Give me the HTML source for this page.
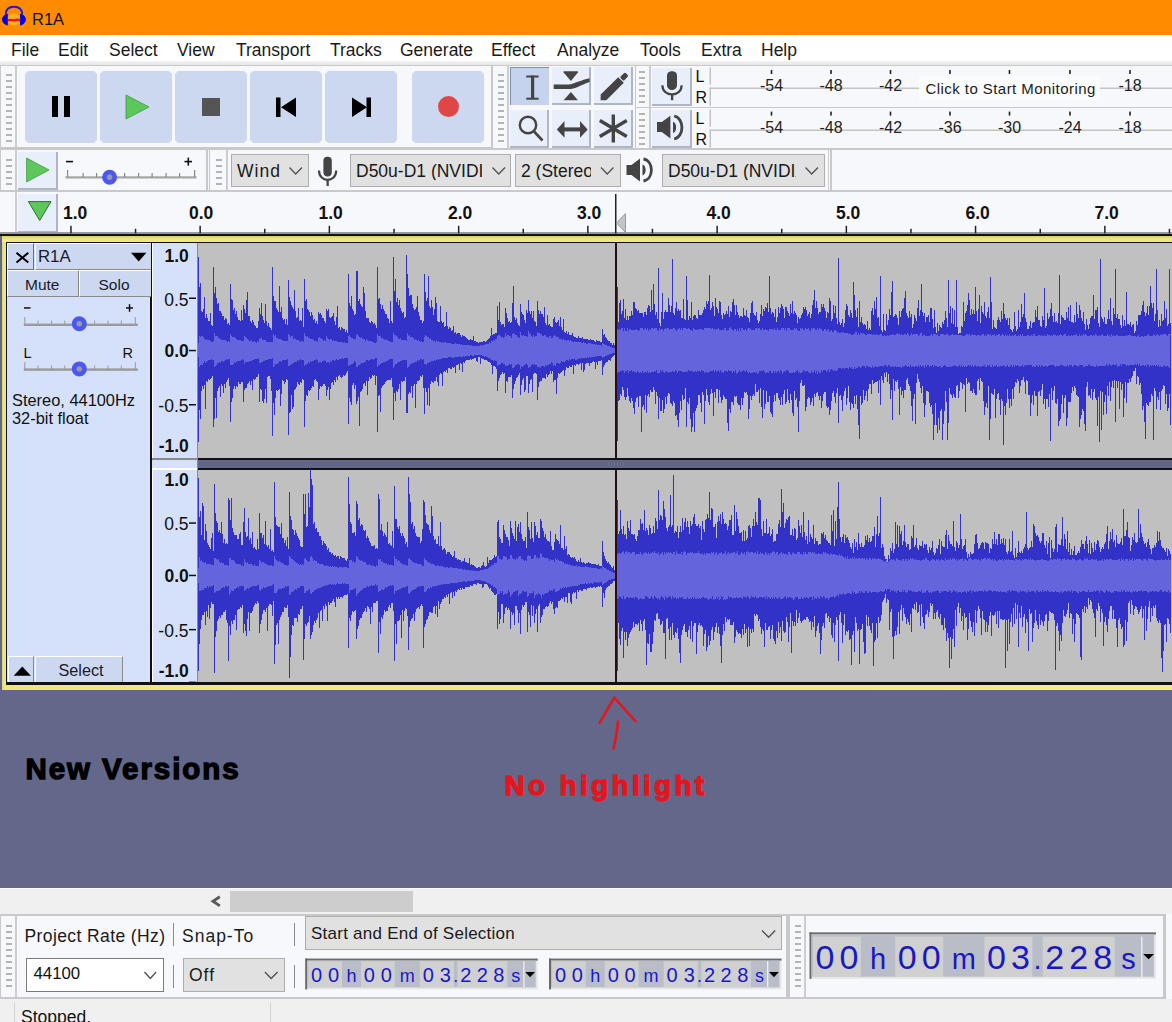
<!DOCTYPE html>
<html><head><meta charset="utf-8">
<style>
*{margin:0;padding:0;box-sizing:border-box}
html,body{width:1172px;height:1022px;overflow:hidden;background:#63678a;font-family:"Liberation Sans",sans-serif;color:#000}
.a{position:absolute}
.t{position:absolute;white-space:nowrap;line-height:1}
#title{left:0;top:0;width:1172px;height:35px;background:#ff8c00}
#menu{left:0;top:35px;width:1172px;height:27px;background:#fff}
#menu .t{top:42px;font-size:17.5px;color:#1a1a1a}
#tb{left:0;top:62px;width:1172px;height:130px;background:#f7f8fc}
.tbb{position:absolute;background:#f7f8fc;border:1px solid #cfcfcf}
.grip{position:absolute;width:6px}
.grip i{position:absolute;left:0;width:6px;height:2px;background:#b4b4b4}
.tbtn{position:absolute;width:72px;height:72px;background:#cbd8f0;clip-path:polygon(3px 0,69px 0,72px 3px,72px 69px,69px 72px,3px 72px,0 69px,0 3px)}
.tool{position:absolute;width:39px;height:38px;background:#e9eefb;border-right:2px solid #aeb6c6;border-bottom:2px solid #aeb6c6}
.combo{position:absolute;height:33px;background:#e1e1e1;border:1px solid #adadad;overflow:hidden}
.combo .t{font-size:17.5px;top:8px;left:5px;color:#1a1a1a}
.chev{position:absolute;width:9px;height:9px;border-right:1.5px solid #444;border-bottom:1.5px solid #444;transform:rotate(45deg)}
</style></head><body>
<!-- title -->
<div id="title" class="a">
 <svg class="a" style="left:0;top:0" width="28" height="30" viewBox="0 0 28 30">
  <path d="M5.8 14.5 C5.8 9 9.2 6.7 14 6.7 C18.8 6.7 22.2 9 22.2 14.5" fill="none" stroke="#1a1ae8" stroke-width="1.9"/>
  <ellipse cx="13.9" cy="19.5" rx="6.2" ry="6" fill="#f4b21c"/>
  <path d="M7.8 20.3 C10 19.6 12 19.8 14 20.5 C16 19.6 18 19.6 20.2 20.3" fill="none" stroke="#f21010" stroke-width="2.4"/>
  <path d="M7.8 13.8 L7.8 25.4 C4.5 25 2 22 2 19.5 C2 17 4.5 14.2 7.8 13.8 Z" fill="#0000f0"/>
  <path d="M20.1 13.8 L20.1 25.4 C23.4 25 25.9 22 25.9 19.5 C25.9 17 23.4 14.2 20.1 13.8 Z" fill="#0000f0"/>
 </svg>
 <div class="t" style="left:32px;top:11px;font-size:16.5px;color:#111">R1A</div>
</div>
<!-- menu -->
<div id="menu" class="a">
 <div class="t" style="left:11px;top:7px">File</div>
 <div class="t" style="left:58px;top:7px">Edit</div>
 <div class="t" style="left:109px;top:7px">Select</div>
 <div class="t" style="left:177px;top:7px">View</div>
 <div class="t" style="left:236px;top:7px">Transport</div>
 <div class="t" style="left:330px;top:7px">Tracks</div>
 <div class="t" style="left:400px;top:7px">Generate</div>
 <div class="t" style="left:491px;top:7px">Effect</div>
 <div class="t" style="left:557px;top:7px">Analyze</div>
 <div class="t" style="left:640px;top:7px">Tools</div>
 <div class="t" style="left:701px;top:7px">Extra</div>
 <div class="t" style="left:761px;top:7px">Help</div>
</div>
<div class="a" style="left:0;top:61px;width:1172px;height:4px;background:linear-gradient(#f4f4f4,#e6e6e6)"></div>
<div class="a" style="left:0;top:65px;width:1172px;height:127px;background:#c9c9c9"></div>
<!-- Transport toolbar -->
<div class="a" style="left:1px;top:66px;width:490px;height:81px;background:#f7f8fc"></div>
<div class="a" style="left:15px;top:66px;width:2px;height:81px;background:#cdcdcd"></div>
<div class="grip" style="left:6px;top:74px;height:70px"><i style="top:0px"></i><i style="top:6px"></i><i style="top:12px"></i><i style="top:18px"></i><i style="top:24px"></i><i style="top:30px"></i><i style="top:36px"></i><i style="top:42px"></i><i style="top:48px"></i><i style="top:54px"></i><i style="top:60px"></i><i style="top:66px"></i></div>
<div class="tbtn" style="left:25px;top:71px"></div>
<div class="tbtn" style="left:100px;top:71px"></div>
<div class="tbtn" style="left:175px;top:71px"></div>
<div class="tbtn" style="left:250px;top:71px"></div>
<div class="tbtn" style="left:325px;top:71px"></div>
<div class="tbtn" style="left:412px;top:71px"></div>
<svg class="a" style="left:0;top:62px" width="492" height="90">
 <rect x="52" y="34" width="6" height="21" fill="#000"/>
 <rect x="64" y="34" width="6" height="21" fill="#000"/>
 <polygon points="126,33 149,45 126,57" fill="#5cc85c" stroke="#3f9a3f" stroke-width="0.8"/>
 <rect x="202" y="36" width="18" height="18" fill="#555"/>
 <rect x="276" y="35.5" width="4.5" height="19.5" fill="#000"/>
 <polygon points="281,45.3 296,35.5 296,55" fill="#000"/>
 <polygon points="352,35.5 367,45.3 352,55" fill="#000"/>
 <rect x="366.5" y="35.5" width="4.5" height="19.5" fill="#000"/>
 <circle cx="448.5" cy="44.6" r="10.5" fill="#e04646"/>
</svg>
<!-- Tools toolbar -->
<div class="a" style="left:493px;top:66px;width:142px;height:82px;background:#f7f8fc"></div>
<div class="a" style="left:507px;top:66px;width:2px;height:82px;background:#cdcdcd"></div>
<div class="grip" style="left:498px;top:74px;height:70px"><i style="top:0px"></i><i style="top:6px"></i><i style="top:12px"></i><i style="top:18px"></i><i style="top:24px"></i><i style="top:30px"></i><i style="top:36px"></i><i style="top:42px"></i><i style="top:48px"></i><i style="top:54px"></i><i style="top:60px"></i><i style="top:66px"></i></div>
<div class="a" style="left:510px;top:67px;width:39px;height:38px;background:#c5d3ee;border-top:1px solid #7f8ea8;border-left:1px solid #7f8ea8"></div>
<div class="tool" style="left:552px;top:67px"></div>
<div class="tool" style="left:594px;top:67px"></div>
<div class="tool" style="left:510px;top:110px"></div>
<div class="tool" style="left:552px;top:110px"></div>
<div class="tool" style="left:594px;top:110px"></div>
<svg class="a" style="left:500px;top:62px" width="140" height="90">
 <g fill="#444" stroke="none">
  <rect x="31" y="13.5" width="3.2" height="23"/>
  <rect x="26.3" y="13.5" width="12.3" height="2"/>
  <rect x="26.3" y="35.7" width="12.3" height="2"/>
  <polygon points="63.6,9.3 77.9,9.3 77.9,10.5 70.9,18.9 63.6,10.5"/>
  <polygon points="70.9,29.9 77.9,38.3 63.6,38.3"/>
  <path d="M53.7 22.5 L69 22.5 C76 21 81 18 89.6 16.2 L89.6 20 C81 23 77 26 71 27 L53.7 27 Z"/>
 </g>
 <polygon points="100.6,38.3 100.7,32.5 118.2,15.2 123.8,20.8 106.3,38.3" fill="#444"/>
 <rect x="-3.6" y="-2.6" width="7.2" height="5.2" rx="1.5" fill="#444" transform="translate(124.2,14.6) rotate(-45)"/>
 <circle cx="28" cy="63" r="8.2" fill="none" stroke="#444" stroke-width="2.4"/>
 <path d="M34 69.5 L42.5 78.5" stroke="#444" stroke-width="2.6"/>
 <path d="M61 67.4 L83 67.4" stroke="#444" stroke-width="4"/>
 <polygon points="56.8,67.4 64.5,59 64.5,75.8" fill="#444"/>
 <polygon points="87.7,67.4 80,59 80,75.8" fill="#444"/>
 <g stroke="#444" stroke-width="3.4">
  <path d="M113.3 52.5 L113.3 80.5"/>
  <path d="M99.8 58.5 L126.8 74.5"/>
  <path d="M99.8 74.5 L126.8 58.5"/>
 </g>
</svg>
<!-- Meter toolbars -->
<div class="a" style="left:636px;top:66px;width:536px;height:41px;background:#f7f8fc"></div>
<div class="a" style="left:636px;top:108px;width:536px;height:40px;background:#f7f8fc"></div>
<div class="a" style="left:649px;top:66px;width:2px;height:82px;background:#cdcdcd"></div>
<div class="grip" style="left:639px;top:71px;height:33px"><i style="top:0px"></i><i style="top:6px"></i><i style="top:12px"></i><i style="top:18px"></i><i style="top:24px"></i><i style="top:30px"></i></div>
<div class="grip" style="left:639px;top:113px;height:33px"><i style="top:0px"></i><i style="top:6px"></i><i style="top:12px"></i><i style="top:18px"></i><i style="top:24px"></i><i style="top:30px"></i></div>
<div class="tool" style="left:652px;top:68px;width:40px;height:38px"></div>
<div class="tool" style="left:652px;top:110px;width:40px;height:38px"></div>
<svg class="a" style="left:650px;top:62px" width="60" height="90">
 <path d="M17 14 C17 10 19.5 9.2 22 9.2 C24.5 9.2 27 10 27 14 L27 23 C27 26.5 24.5 28 22 28 C19.5 28 17 26.5 17 23 Z" fill="#444"/>
 <path d="M12.4 23.2 C12.4 35.5 31.6 35.5 31.6 23.2" fill="none" stroke="#444" stroke-width="2.2"/>
 <rect x="20.9" y="32" width="2.4" height="6.2" fill="#444"/>
 <polygon points="7,60.1 11.8,60.1 20.4,53.7 20.4,76.5 11.8,70 7,70" fill="#444"/>
 <path d="M23 59.7 C27.2 60.7 27.2 70 23 71" fill="#444"/>
 <path d="M24.2 54 C34.5 56 34.5 75 24.2 77" fill="none" stroke="#444" stroke-width="2.8"/>
</svg>
<svg class="a" style="left:0;top:0" width="1172" height="160">
<text x="695.5" y="81.9" font-size="16" fill="#111">L</text>
<text x="695.5" y="102.5" font-size="16" fill="#111">R</text>
<rect x="709.5" y="67.6" width="1.5" height="17.1" fill="#c4c4c4"/>
<rect x="709.5" y="87.5" width="1.5" height="18.4" fill="#c4c4c4"/>
<rect x="709.5" y="87.5" width="463" height="1.5" fill="#c4c4c4"/>
<rect x="770.7" y="70.0" width="1.6" height="4" fill="#222"/>
<text x="771.5" y="91.0" font-size="16" fill="#222" text-anchor="middle">-54</text>
<rect x="830.2" y="70.0" width="1.6" height="4" fill="#222"/>
<text x="831.0" y="91.0" font-size="16" fill="#222" text-anchor="middle">-48</text>
<rect x="889.7" y="70.0" width="1.6" height="4" fill="#222"/>
<text x="890.5" y="91.0" font-size="16" fill="#222" text-anchor="middle">-42</text>
<rect x="949.2" y="70.0" width="1.6" height="4" fill="#222"/>
<rect x="1008.7" y="70.0" width="1.6" height="4" fill="#222"/>
<rect x="1069.2" y="70.0" width="1.6" height="4" fill="#222"/>
<rect x="1129.2" y="70.0" width="1.6" height="4" fill="#222"/>
<text x="1130.0" y="91.0" font-size="16" fill="#222" text-anchor="middle">-18</text>
<text x="695.5" y="123.8" font-size="16" fill="#111">L</text>
<text x="695.5" y="144.8" font-size="16" fill="#111">R</text>
<rect x="709.5" y="109.4" width="1.5" height="17.3" fill="#c4c4c4"/>
<rect x="709.5" y="129.5" width="1.5" height="18.2" fill="#c4c4c4"/>
<rect x="709.5" y="129.5" width="463" height="1.5" fill="#c4c4c4"/>
<rect x="770.7" y="111.6" width="1.6" height="4" fill="#222"/>
<text x="771.5" y="133.0" font-size="16" fill="#222" text-anchor="middle">-54</text>
<rect x="830.2" y="111.6" width="1.6" height="4" fill="#222"/>
<text x="831.0" y="133.0" font-size="16" fill="#222" text-anchor="middle">-48</text>
<rect x="889.7" y="111.6" width="1.6" height="4" fill="#222"/>
<text x="890.5" y="133.0" font-size="16" fill="#222" text-anchor="middle">-42</text>
<rect x="949.2" y="111.6" width="1.6" height="4" fill="#222"/>
<text x="950.0" y="133.0" font-size="16" fill="#222" text-anchor="middle">-36</text>
<rect x="1008.7" y="111.6" width="1.6" height="4" fill="#222"/>
<text x="1009.5" y="133.0" font-size="16" fill="#222" text-anchor="middle">-30</text>
<rect x="1069.2" y="111.6" width="1.6" height="4" fill="#222"/>
<text x="1070.0" y="133.0" font-size="16" fill="#222" text-anchor="middle">-24</text>
<rect x="1129.2" y="111.6" width="1.6" height="4" fill="#222"/>
<text x="1130.0" y="133.0" font-size="16" fill="#222" text-anchor="middle">-18</text>
<rect x="919" y="76" width="181" height="24" fill="#fbfcfe"/>
<text x="925.5" y="93.5" font-size="15" fill="#222" letter-spacing="0.44">Click to Start Monitoring</text>
</svg><!-- Row 2 -->
<div class="a" style="left:1px;top:150px;width:205px;height:40px;background:#f7f8fc"></div>
<div class="a" style="left:15px;top:150px;width:2px;height:40px;background:#cdcdcd"></div>
<div class="grip" style="left:6px;top:159px;height:28px"><i style="top:0px"></i><i style="top:6px"></i><i style="top:12px"></i><i style="top:18px"></i><i style="top:24px"></i></div>
<div class="tool" style="left:18px;top:152px;width:40px;height:38px"></div>
<svg class="a" style="left:0;top:148px" width="206" height="44">
 <polygon points="26.6,10 49,22 26.6,34" fill="#5cc85c" stroke="#3f9a3f" stroke-width="0.8"/>
 <rect x="65.5" y="28.3" width="131" height="2.2" fill="#a4a4a4"/>
 <g fill="#888">
  <rect x="67" y="22" width="1.2" height="7"/><rect x="82.5" y="25" width="1.2" height="4"/><rect x="96" y="25" width="1.2" height="4"/>
  <rect x="124" y="25" width="1.2" height="4"/><rect x="138" y="25" width="1.2" height="4"/><rect x="151.5" y="25" width="1.2" height="4"/>
  <rect x="165.5" y="25" width="1.2" height="4"/><rect x="179" y="25" width="1.2" height="4"/><rect x="194" y="22" width="1.2" height="7"/>
 </g>
 <rect x="66" y="12.8" width="7" height="1.6" fill="#111"/>
 <rect x="184.5" y="12.8" width="7.5" height="1.6" fill="#111"/>
 <rect x="187.5" y="9.6" width="1.6" height="8" fill="#111"/>
 <circle cx="109.6" cy="29.3" r="5.1" fill="#9a9aa6" stroke="#4a58f0" stroke-width="4.8"/>
</svg>
<div class="a" style="left:208px;top:150px;width:1px;height:40px;background:#f7f8fc"></div>
<div class="a" style="left:210px;top:150px;width:620px;height:40px;background:#f7f8fc"></div>
<div class="a" style="left:226px;top:150px;width:2px;height:40px;background:#cdcdcd"></div>
<div class="grip" style="left:216px;top:159px;height:28px"><i style="top:0px"></i><i style="top:6px"></i><i style="top:12px"></i><i style="top:18px"></i><i style="top:24px"></i></div>
<div class="combo" style="left:231px;top:154px;width:78px"><div class="t" style="left:5px;top:7.5px;letter-spacing:1px">Wind</div></div>
<div class="combo" style="left:350px;top:154px;width:161px"><div class="t" style="left:5px;top:7.5px;width:126px;overflow:hidden">D50u-D1 (NVIDIA</div></div>
<div class="combo" style="left:515px;top:154px;width:106px"><div class="t" style="left:5px;top:7.5px;width:70px;overflow:hidden">2 (Stereo)</div></div>
<div class="combo" style="left:662px;top:154px;width:163px"><div class="t" style="left:5px;top:7.5px;width:128px;overflow:hidden">D50u-D1 (NVIDIA</div></div>
<svg class="a" style="left:200px;top:148px" width="640" height="44">
 <g fill="none" stroke="#505050" stroke-width="1.3">
  <polyline points="89.5,19.5 95.7,26 102,19.5"/>
  <polyline points="292.5,19.5 298.7,26 305,19.5"/>
  <polyline points="401,19.5 407.2,26 413.5,19.5"/>
  <polyline points="605.5,19.5 611.7,26 618,19.5"/>
 </g>
 <path d="M123.4 13 C123.4 9.5 125.5 8.8 127.6 8.8 C129.7 8.8 131.8 9.5 131.8 13 L131.8 24 C131.8 27.5 129.7 28.6 127.6 28.6 C125.5 28.6 123.4 27.5 123.4 24 Z" fill="#444"/>
 <path d="M119 22.5 C119 35 136.2 35 136.2 22.5" fill="none" stroke="#444" stroke-width="2.2"/>
 <rect x="126.5" y="31.5" width="2.3" height="6.5" fill="#444"/>
 <polygon points="426.5,17 431.5,17 440,10.5 440,33.5 431.5,27 426.5,27" fill="#444"/>
 <path d="M442.5 16.5 C446.7 17.5 446.7 26.5 442.5 27.5" fill="#444"/>
 <path d="M443.5 11 C454 13 454 31 443.5 33" fill="none" stroke="#444" stroke-width="2.8"/>
</svg>
<div class="a" style="left:828px;top:150px;width:1px;height:40px;background:#cdcdcd"></div>
<div class="a" style="left:832px;top:150px;width:340px;height:40px;background:#f7f8fc"></div>
<!-- Ruler -->
<div class="a" style="left:0;top:192px;width:1172px;height:40px;background:#f7f8fc"></div>
<div class="a" style="left:15px;top:192px;width:2px;height:42px;background:#cdcdcd"></div>
<div class="tool" style="left:18px;top:194px;width:40px;height:39px"></div>
<div class="a" style="left:0;top:232px;width:1172px;height:2px;background:#9a9a9a"></div>
<div class="a" style="left:0;top:234px;width:1172px;height:2px;background:#111"></div>
<svg class="a" style="left:0;top:190px" width="1172" height="46">
 <polygon points="28.4,11.6 51,11.6 39.7,30.5" fill="#5cc85c" stroke="#2f6f2f" stroke-width="1"/>
 <g font-size="17.5" font-weight="bold" fill="#111">
  <text x="63" y="29.4">1.0</text>
  <text x="189" y="29.4">0.0</text>
  <text x="318.5" y="29.4">1.0</text>
  <text x="448" y="29.4">2.0</text>
  <text x="577" y="29.4">3.0</text>
  <text x="706.5" y="29.4">4.0</text>
  <text x="836" y="29.4">5.0</text>
  <text x="965.5" y="29.4">6.0</text>
  <text x="1094.5" y="29.4">7.0</text>
 </g>
 <g fill="#222"><rect x="70.2" y="35.8" width="1.5" height="7.5"/><rect x="134.8" y="38.8" width="1.5" height="4.5"/><rect x="199.4" y="35.8" width="1.5" height="7.5"/><rect x="264.0" y="38.8" width="1.5" height="4.5"/><rect x="328.6" y="35.8" width="1.5" height="7.5"/><rect x="393.3" y="38.8" width="1.5" height="4.5"/><rect x="457.9" y="35.8" width="1.5" height="7.5"/><rect x="522.5" y="38.8" width="1.5" height="4.5"/><rect x="587.1" y="35.8" width="1.5" height="7.5"/><rect x="651.7" y="38.8" width="1.5" height="4.5"/><rect x="716.4" y="35.8" width="1.5" height="7.5"/><rect x="781.0" y="38.8" width="1.5" height="4.5"/><rect x="845.6" y="35.8" width="1.5" height="7.5"/><rect x="910.2" y="38.8" width="1.5" height="4.5"/><rect x="974.8" y="35.8" width="1.5" height="7.5"/><rect x="1039.5" y="38.8" width="1.5" height="4.5"/><rect x="1104.1" y="35.8" width="1.5" height="7.5"/><rect x="1168.7" y="38.8" width="1.5" height="4.5"/><rect x="615" y="4" width="1.5" height="39.5" fill="#222"/><polygon points="616.5,33 625.5,23.6 625.5,42.4" fill="#c4c4c4" stroke="#9a9a9a" stroke-width="1"/></g>
</svg>
<!-- Track frame -->
<div class="a" style="left:2px;top:236px;width:1170px;height:454px;background:linear-gradient(90deg,#d9d47a,#ede87a 2px,#f0ec80)"></div>
<div class="a" style="left:2px;top:236px;width:1170px;height:6px;background:linear-gradient(#cfc97a,#e8e37c 2px,#f0ec80)"></div>
<div class="a" style="left:6px;top:242px;width:1166px;height:443px;background:#111"></div>
<!-- panel -->
<div class="a" style="left:7px;top:243px;width:143px;height:439px;background:#d5e1fa"></div>
<div class="a" style="left:7px;top:243px;width:27px;height:27px;background:#cbd8f0;border-top:1px solid #fff;border-left:1px solid #fff;border-right:1px solid #707070;border-bottom:1px solid #707070"></div>
<div class="a" style="left:35px;top:243px;width:116px;height:27px;background:#cbd8f0;border-top:1px solid #fff;border-left:1px solid #fff;border-bottom:1px solid #8a8a8a"></div>
<div class="a" style="left:7px;top:270px;width:72px;height:27px;background:#cbd8f0;border-top:1px solid #fff;border-left:1px solid #fff;border-right:1px solid #8a8a8a;border-bottom:1px solid #8a8a8a"></div>
<div class="a" style="left:79px;top:270px;width:72px;height:27px;background:#cbd8f0;border-top:1px solid #fff;border-left:1px solid #fff;border-bottom:1px solid #8a8a8a"></div>
<div class="t" style="left:38px;top:249px;font-size:16.8px;color:#1a1a2a">R1A</div>
<div class="t" style="left:25px;top:276.5px;font-size:15.5px;color:#1a1a2a">Mute</div>
<div class="t" style="left:98.5px;top:276.5px;font-size:15.5px;color:#1a1a2a">Solo</div>
<div class="t" style="left:12px;top:392px;font-size:16.4px;color:#111">Stereo, 44100Hz</div>
<div class="t" style="left:12px;top:410px;font-size:16.4px;color:#111">32-bit float</div>
<div class="a" style="left:8px;top:656px;width:26px;height:26px;background:#cbd8f0;border-top:1px solid #fff;border-left:1px solid #fff;border-right:1px solid #8a8a8a"></div>
<div class="a" style="left:35px;top:656px;width:88px;height:26px;background:#cbd8f0;border-top:1px solid #fff;border-left:1px solid #fff;border-right:1px solid #8a8a8a"></div>
<div class="t" style="left:58.5px;top:662px;font-size:16.2px;color:#1a1a2a">Select</div>
<div class="a" style="left:150px;top:297px;width:1.6px;height:386px;background:#111"></div>
<svg class="a" style="left:0;top:236px" width="200" height="450">
 <path d="M16.5 16.8 L28.3 26.5 M28.3 16.8 L16.5 26.5" stroke="#000" stroke-width="2"/>
 <polygon points="131,16.7 146.4,16.7 138.7,25.5" fill="#000"/>
 <g fill="#9a9a9a">
  <rect x="23.8" y="87.6" width="114" height="2.4"/>
  <rect x="23.8" y="132.4" width="114" height="2.4"/>
 </g>
 <g fill="#a0a0a0">
  <rect x="24.2" y="81" width="1.1" height="7"/><rect x="37.5" y="84.5" width="1.1" height="3.5"/><rect x="51" y="84.5" width="1.1" height="3.5"/><rect x="64.3" y="84.5" width="1.1" height="3.5"/>
  <rect x="94" y="84.5" width="1.1" height="3.5"/><rect x="107.5" y="84.5" width="1.1" height="3.5"/><rect x="120.8" y="84.5" width="1.1" height="3.5"/><rect x="134.8" y="81" width="1.1" height="7"/>
  <rect x="24.2" y="126" width="1.1" height="7"/><rect x="37.5" y="129.5" width="1.1" height="3.5"/><rect x="51" y="129.5" width="1.1" height="3.5"/><rect x="64.3" y="129.5" width="1.1" height="3.5"/>
  <rect x="94" y="129.5" width="1.1" height="3.5"/><rect x="107.5" y="129.5" width="1.1" height="3.5"/><rect x="120.8" y="129.5" width="1.1" height="3.5"/><rect x="134.8" y="126" width="1.1" height="7"/>
 </g>
 <rect x="24" y="71.2" width="6.5" height="1.5" fill="#111"/>
 <rect x="126" y="71.2" width="7" height="1.5" fill="#111"/>
 <rect x="128.8" y="68.2" width="1.5" height="7.5" fill="#111"/>
 <text x="23.5" y="121.5" font-size="14.5" fill="#111">L</text>
 <text x="122.5" y="121.5" font-size="14.5" fill="#111">R</text>
 <circle cx="79.3" cy="87.8" r="5.1" fill="#9a9aa6" stroke="#4a58f0" stroke-width="4.8"/>
 <circle cx="79.3" cy="132.9" r="5.1" fill="#9a9aa6" stroke="#4a58f0" stroke-width="4.8"/>
 <polygon points="13.7,439.8 30.9,439.8 22.3,430.6" fill="#000"/>
</svg>
<!-- vertical ruler -->
<div class="a" style="left:151.6px;top:243px;width:46px;height:215px;background:#d5e1fa;border-left:1.2px solid #fff"></div>
<div class="a" style="left:151.6px;top:458px;width:46px;height:2px;background:#8a8a8a"></div>
<div class="a" style="left:151.6px;top:460px;width:46px;height:8px;background:#d5e1fa"></div>
<div class="a" style="left:151.6px;top:468px;width:46px;height:214px;background:#d5e1fa;border-left:1.2px solid #fff;border-top:2px solid #fff"></div>
<div class="a" style="left:196.7px;top:243px;width:1.3px;height:439px;background:#8a8a8a"></div>
<svg class="a" style="left:150px;top:236px" width="50" height="450">
 <g font-size="17.5" fill="#111" text-anchor="end">
  <text x="38.8" y="26" font-weight="bold">1.0</text>
  <text x="38.5" y="69.5">0.5</text>
  <text x="38.8" y="121.3" font-weight="bold">0.0</text>
  <text x="38.5" y="175.7">-0.5</text>
  <text x="38.8" y="216" font-weight="bold">-1.0</text>
  <text x="38.8" y="250.3" font-weight="bold">1.0</text>
  <text x="38.5" y="294">0.5</text>
  <text x="38.8" y="346" font-weight="bold">0.0</text>
  <text x="38.5" y="400.7">-0.5</text>
  <text x="38.8" y="440.6" font-weight="bold">-1.0</text>
 </g>
 <g fill="#111">
  <rect x="39" y="61.5" width="7" height="1.5"/>
  <rect x="39" y="113.8" width="7" height="1.5"/>
  <rect x="39" y="168" width="7" height="1.5"/>
  <rect x="39" y="286.3" width="7" height="1.5"/>
  <rect x="39" y="338.7" width="7" height="1.5"/>
  <rect x="39" y="392.9" width="7" height="1.5"/>
  <rect x="39" y="445.6" width="7" height="1.5"/>
 </g>
</svg>
<!-- waveform bg -->
<div class="a" style="left:198px;top:243px;width:974px;height:215px;background:#c0c0c0"></div>
<div class="a" style="left:198px;top:458px;width:974px;height:2px;background:#111"></div>
<div class="a" style="left:198px;top:460px;width:974px;height:7.5px;background:#63678a"></div>
<div class="a" style="left:198px;top:467.5px;width:974px;height:2px;background:#111"></div>
<div class="a" style="left:198px;top:469.5px;width:974px;height:212.5px;background:#c0c0c0"></div>
<svg class="a" style="left:0;top:0" width="1172" height="700" shape-rendering="crispEdges">
<path d="M198 257H199V287H200V283H201V311H202V312H203V309H204V297H205V318H206V314H207V318H208V321H209H210V313H211V325H212V326H213V267H214V293H215V287H216V298H217V304H218V303H219V311H220H221V313H222V316H223H224V320H225V318H226V319H227V324H228V323H229V325H230V284H231V299H232V300H233V310H234V308H235V314H236V311H237V317H238V320H239H240V321H241V310H242V320H243V305H244V309H245V313H246V300H247V292H248V316H249H250V321H251V323H252V320H253V322H254V325H255V326H256V328H257H258V321H259V308H260V314H261V303H262V316H263V320H264V323H265V304H266V321H267V326H268V323H269V327H270V328H271V330H272V267H273V296H274V301H275H276V308H277V310H278V312H279V286H280V312H281V307H282V318H283V320H284V319H285V324H286V319H287V325H288V280H289V297H290V301H291V305H292V307H293V309H294V290H295V311H296V318H297V317H298V308H299V321H300V320H301V321H302V308H303V327H304V279H305V301H306V299H307V309H308V310H309V312H310V316H311V312H312V315H313V320H314V319H315V323H316V321H317V324H318V312H319V314H320V313H321V315H322V318H323H324V321H325V323H326V309H327V311H328V309H329V317H330V318H331V317H332V316H333V313H334V321H335V325H336V317H337V306H338V328H339V327H340V330H341V327H342V328H343V329H344H345V332H346V330H347V333H348V274H349V303H350V306H351V296H352V309H353V311H354V315H355V314H356V271H357H358V301H359V299H360V304H361V306H362V307H363V287H364V293H365V311H366V318H367H368H369V322H370V323H371V321H372V322H373V324H374V323H375V325H376V328H377V267H378V299H379V298H380V304H381V309H382V305H383V309H384V311H385V314H386H387V318H388V319H389V323H390V301H391V321H392V323H393V257H394V291H395V279H396V302H397V298H398V305H399V300H400V308H401V311H402V313H403V312H404V318H405V317H406V255H407V274H408V288H409V296H410V295H411H412V304H413V308H414V310H415V309H416V307H417V296H418V312H419V316H420V320H421H422V323H423V321H424V274H425V292H426V301H427V298H428V276H429V306H430V308H431V300H432V307H433V315H434V309H435V297H436V303H437V321H438V322H439H440V306H441V321H442V323H443V322H444V327H445V326H446V312H447V326H448V329H449V327H450V328H451V331H452V330H453V326H454V333H455V332H456V334H457V333H458H459H460V335H461V337H462V335H463V336H464H465V337H466V338H467V339H468V340H469H470V339H471V340H472H473V336H474V341H475H476V342H477H478V343H479V342H480H481H482H483V341H484H485V342H486V341H487V340H488V339H489V338H490V336H491V328H492V335H493V334H494H495V333H496H497V306H498V320H499V302H500V322H501V325H502V324H503H504V327H505V308H506V313H507V318H508V322H509V321H510V323H511V322H512V303H513V286H514V317H515V320H516V318H517V323H518V325H519V326H520V304H521V312H522V314H523V315H524V320H525V323H526V310H527V313H528V300H529V311H530V314H531V311H532V318H533V311H534V321H535V322H536V326H537V301H538V310H539V314H540V311H541V314H542H543V317H544V307H545V323H546V325H547V315H548V325H549V324H550V326H551V327H552H553V319H554V317H555V322H556V323H557V322H558V320H559V326H560V317H561V327H562V330H563V319H564V332H565V333H566V331H567V334H568V332H569V335H570H571H572V333H573V336H574V337H575H576V338H577H578V336H579V338H580H581H582V337H583V339H584H585H586H587H588V340H589H590V339H591V340H592H593H594V341H595V342H596V340H597V341H598H599H600V342H601H602V329H603V335H604V334H605V337H606V338H607V340H608V341H609H610V343H611H612V345H613V343H614V345H615H616V318H617V287H618V322H619V303H620V300H621V314H622V311H623V299H624V318H625V309H626V320H627V316H628V320H629V316H630H631V311H632V315H633V302H634H635V308H636V309H637V311H638V310H639V313H640H641H642H643V317H644V312H645H646V315H647V308H648V305H649V306H650V312H651V290H652V310H653V284H654V304H655V315H656V312H657V319H658V268H659V323H660V326H661V312H662V293H663V319H664V312H665V310H666V312H667H668V298H669V305H670V312H671V306H672V259H673V313H674V315H675V308H676V302H677V311H678V309H679V311H680V310H681V318H682H683V299H684V319H685V320H686V276H687V300H688V320H689V316H690V318H691V302H692V320H693V316H694V315H695H696V318H697V319H698V310H699V315H700H701H702V313H703V310H704V307H705V309H706V301H707V304H708V301H709V275H710V310H711V308H712V302H713V306H714V316H715V298H716V307H717V309H718V313H719V301H720V302H721V315H722V319H723V313H724V315H725V314H726V311H727V314H728V306H729V317H730V311H731V312H732V302H733V299H734V305H735V315H736V305H737V312H738V315H739V318H740V316H741H742V317H743V308H744V315H745V316H746V310H747V317H748V318H749V322H750V313H751V303H752V301H753V313H754V315H755V316H756V312H757V320H758V323H759V321H760V314H761V305H762V316H763V309H764V311H765V307H766V308H767V303H768V312H769V276H770V308H771V314H772V312H773V313H774V317H775V309H776V322H777V317H778V307H779V313H780V308H781V304H782V306H783V309H784V318H785V307H786H787V311H788V313H789V316H790V304H791V313H792V301H793V314H794V311H795V313H796V315H797V323H798V317H799V319H800V318H801V315H802V313H803V307H804V309H805V307H806V310H807V316H808V314H809V312H810V318H811V314H812V305H813V300H814V290H815V308H816V301H817V308H818V314H819V312H820H821V304H822V307H823V304H824V308H825V311H826V318H827V312H828V313H829V298H830V301H831V321H832V319H833V305H834V313H835V306H836V318H837V324H838V258H839V322H840V325H841V323H842V319H843V327H844V323H845V310H846V304H847V306H848V315H849V317H850V310H851V313H852V318H853V282H854V295H855V310H856V317H857V308H858V327H859V301H860V322H861V317H862V323H863V325H864V324H865V325H866V329H867V321H868V330H869V328H870V330H871V311H872V308H873V315H874V301H875V309H876V297H877V318H878V317H879V326H880V276H881V330H882V332H883V314H884V330H885V331H886V314H887V325H888V320H889V309H890V315H891V292H892V281H893V317H894V316H895V314H896V315H897V318H898V325H899V311H900V317H901V311H902V309H903V308H904V298H905V291H906V313H907V316H908V318H909V311H910V317H911V314H912V328H913V324H914V315H915V318H916V321H917V308H918V300H919V316H920V310H921V284H922V312H923V316H924V313H925V322H926V317H927H928V315H929V322H930V308H931H932V319H933V328H934V310H935V327H936V333H937V323H938V331H939V325H940V327H941V328H942V322H943V324H944V320H945V311H946V318H947V327H948V280H949V313H950V306H951V323H952V308H953V324H954V310H955V327H956V280H957V327H958V334H959V333H960H961V326H962V327H963V302H964V321H965V313H966V311H967V305H968V293H969V300H970V315H971V309H972V314H973V310H974V314H975V287H976V311H977V321H978V309H979V295H980V323H981V306H982V312H983V314H984V302H985V316H986V318H987V312H988V307H989V318H990V277H991V302H992V329H993V320H994V327H995V328H996V329H997V320H998V317H999V320H1000V322H1001V311H1002V319H1003V303H1004V314H1005V318H1006V320H1007V318H1008V325H1009V318H1010V329H1011V330H1012V332H1013V329H1014V312H1015V326H1016V331H1017V329H1018V310H1019V327H1020V322H1021V304H1022V317H1023V314H1024V293H1025V318H1026V322H1027V329H1028H1029V326H1030V321H1031V328H1032V323H1033V322H1034H1035V310H1036V317H1037V306H1038V320H1039H1040V326H1041V327H1042V316H1043V320H1044V288H1045V328H1046V326H1047V313H1048V319H1049V317H1050V309H1051V303H1052V316H1053V322H1054V313H1055V322H1056V321H1057V323H1058V313H1059V275H1060V324H1061V315H1062V317H1063V318H1064V320H1065H1066V312H1067V318H1068V307H1069V321H1070V305H1071V322H1072H1073V323H1074V315H1075V322H1076V302H1077V314H1078V318H1079V305H1080V310H1081V318H1082V321H1083V312H1084V324H1085V330H1086V319H1087V325H1088V329H1089V324H1090V318H1091V316H1092H1093V295H1094V319H1095V310H1096H1097V307H1098V323H1099V327H1100V259H1101V317H1102V319H1103V322H1104V317H1105V324H1106H1107V319H1108V310H1109V319H1110V298H1111V321H1112V325H1113V308H1114V314H1115V269H1116V318H1117V314H1118V319H1119H1120V325H1121V328H1122V315H1123V326H1124V320H1125V326H1126V292H1127V324H1128H1129V325H1130V322H1131V327H1132V325H1133V324H1134V333H1135V331H1136V321H1137V325H1138V315H1139H1140H1141V311H1142V305H1143V301H1144V312H1145V316H1146V313H1147V306H1148V315H1149V306H1150V286H1151V303H1152V308H1153V303H1154V321H1155V314H1156V269H1157V310H1158V327H1159V320H1160V326H1161V314H1162V321H1163V320H1164V301H1165V318H1166V309H1167V326H1168V324H1169V269H1170V323H1171V316H1172H1171V425H1170V394H1169V408H1168V411H1167V394H1166V404H1165V386H1164V385H1163V389H1162V391H1161V410H1160V392H1159V400H1158V397H1157V409H1156V391H1155V388H1154V440H1153V396H1152V394H1151V402H1150H1149V406H1148V405H1147V403H1146V439H1145V422H1144V406H1143V410H1142V394H1141V383H1140V385H1139V377H1138V376H1137V384H1136V368H1135V371H1134H1133V376H1132V378H1131V382H1130V379H1129V383H1128H1127V403H1126V382H1125V398H1124V417H1123V384H1122V390H1121V382H1120V409H1119V381H1118V388H1117V381H1116V422H1115V380H1114V388H1113V381H1112V387H1111V401H1110V382H1109V396H1108V386H1107V414H1106V395H1105V402H1104V415H1103V392H1102V430H1101V391H1100V442H1099V397H1098V426H1097V400H1096V398H1095V389H1094V392H1093V400H1092V389H1091V398H1090V395H1089V396H1088V382H1087V387H1086V431H1085V424H1084V411H1083V409H1082V415H1081V419H1080V427H1079V397H1078V396H1077V395H1076V388H1075V386H1074V391H1073V387H1072V393H1071V402H1070H1069H1068V418H1067V426H1066V395H1065V398H1064V413H1063V395H1062V404H1061V419H1060V421H1059V426H1058V399H1057V404H1056V403H1055V386H1054V391H1053V400H1052V388H1051V441H1050V394H1049V407H1048V399H1047H1046V409H1045V399H1044V404H1043V384H1042V390H1041V396H1040V391H1039V392H1038V416H1037V396H1036H1035V391H1034V405H1033V395H1032V403H1031V416H1030V395H1029H1028V381H1027V380H1026V394H1025V382H1024V377H1023V380H1022H1021V386H1020V393H1019V381H1018V379H1017V383H1016V382H1015V387H1014V399H1013V389H1012V406H1011V399H1010V408H1009V399H1008V389H1007V403H1006V415H1005V406H1004V445H1003V401H1002V399H1001V415H1000V400H999V393H998V394H997V399H996V418H995V389H994V395H993V394H992V393H991V419H990V440H989V386H988V408H987V403H986V407H985V415H984V401H983V382H982V381H981V378H980V390H979V379H978V381H977V395H976H975V393H974V389H973V393H972V391H971H970V383H969V382H968V384H967V378H966V412H965V385H964V384H963V389H962V383H961V382H960V391H959V398H958V385H957V386H956V398H955V397H954V394H953V398H952V395H951V394H950V388H949V423H948V440H947V402H946V391H945V411H944V424H943V440H942V409H941V411H940V430H939V418H938V433H937V425H936V403H935V425H934V440H933V414H932V405H931V407H930V403H929V392H928V391H927H926V405H925V417H924V403H923V386H922V393H921V388H920V382H919V379H918V374H917V383H916V424H915V394H914V399H913V421H912V406H911V391H910V386H909V384H908V378H907V380H906V390H905H904V398H903V391H902V395H901V387H900V415H899V389H898V380H897V382H896V381H895V391H894V379H893V420H892V390H891V399H890V384H889V374H888V382H887V372H886V377H885V373H884V383H883V380H882V376H881V405H880V380H879V393H878V381H877V382H876H875V383H874V384H873V380H872V394H871V384H870H869V389H868V401H867V391H866V396H865V400H864V390H863V403H862V405H861V396H860V439H859V425H858V409H857V395H856V404H855V396H854V408H853V404H852V403H851V410H850V402H849V386H848V398H847V405H846V388H845V391H844V396H843V411H842V400H841V395H840V396H839V423H838V388H837V393H836V403H835V397H834V391H833V393H832V401H831V410H830V415H829V407H828V408H827V406H826V392H825H824V394H823V401H822V408H821V396H820V400H819V396H818V392H817V393H816V397H815V394H814V406H813V398H812V402H811V405H810V398H809V397H808V399H807V407H806V411H805V385H804V386H803H802V380H801V383H800V401H799V432H798V407H797V398H796V400H795V391H794V416H793V413H792V400H791V394H790V403H789V400H788V389H787V402H786V404H785V390H784V394H783V405H782V397H781V405H780V400H779V398H778V393H777H776V401H775V395H774V402H773V417H772V414H771V412H770V396H769V402H768H767V391H766V404H765V409H764V390H763V418H762V407H761V388H760V403H759V390H758V392H757H756V384H755V396H754V394H753V396H752V400H751V396H750V409H749V419H748V395H747V392H746V393H745V392H744V398H743V405H742V398H741V410H740V405H739H738V403H737V396H736V397H735V396H734V405H733V402H732H731V413H730V409H729V431H728V423H727V399H726H725V397H724V395H723V400H722V403H721V397H720V390H719V403H718V389H717H716V398H715V392H714V416H713V393H712V389H711V394H710V405H709V402H708V395H707V389H706V401H705V424H704V395H703V392H702V412H701V403H700V395H699H698V405H697V408H696V411H695V432H694V413H693V427H692V432H691V419H690V398H689V404H688V402H687V427H686V388H685V399H684V400H683V395H682V410H681V401H680V413H679V427H678V420H677V415H676V416H675V403H674V401H673V406H672V404H671V403H670V394H669V393H668V396H667V404H666V397H665V409H664V413H663V400H662V411H661H660V398H659V419H658V396H657V392H656V404H655V390H654V387H653V392H652H651V390H650V397H649V394H648V396H647V413H646V395H645V410H644V405H643V407H642V432H641V396H640H639V407H638V397H637V398H636V402H635V414H634V408H633V401H632V398H631V403H630V401H629V396H628V388H627V397H626V400H625V397H624V390H623V387H622V396H621V394H620V400H619V401H618V441H617V416H616V355H615H614V356H613V357H612V358H611V361H610V360H609H608V362H607H606V363H605V365H604V367H603V375H602V360H601V361H600H599H598V365H597V362H596V369H595V362H594V361H593V362H592V363H591H590V366H589V363H588H587H586V364H585V370H584V372H583V363H582V370H581V363H580V364H579V365H578V364H577H576V366H575V365H574V374H573V365H572V367H571H570V366H569V368H568H567V367H566V370H565V376H564V370H563V371H562V372H561V373H560V374H559V373H558V378H557V394H556V380H555H554V382H553V371H552V374H551V371H550V374H549V375H548V377H547V374H546V379H545V378H544H543H542V381H541H540V382H539V387H538V400H537V374H536V373H535H534V374H533V392H532V379H531V380H530V384H529V393H528V376H527H526V390H525V392H524V378H523V380H522V385H521V395H520V373H519V375H518V377H517V378H516V381H515V384H514V389H513V398H512V375H511V377H510H509H508V382H507V381H506V393H505V373H504V374H503V372H502V374H501V375H500V378H499V381H498V391H497V369H496V367H495V366H494H493V374H492V365H491V363H490V362H489H488V361H487V360H486H485H484V359H483H482V358H481V364H480V357H479H478V362H477V361H476V358H475H474V359H473H472V360H471V359H470V360H469H468H467H466V361H465V363H464V362H463V372H462V364H461V363H460V370H459V364H458V365H457H456V373H455V367H454V368H453V367H452V369H451H450V368H449H448V373H447V370H446V372H445V371H444V372H443V386H442V374H441V373H440V375H439V386H438V382H437V377H436V381H435H434V383H433V382H432V381H431V384H430V406H429V388H428V405H427V392H426V388H425V414H424V388H423V375H422V377H421V376H420V380H419V381H418H417V384H416V408H415V384H414V386H413V398H412V386H411V393H410V392H409V394H408V413H407H406V377H405V381H404H403V382H402V381H401V400H400V384H399V389H398V392H397V391H396V401H395V393H394V420H393V387H392V378H391V380H390H389H388H387V381H386V382H385V384H384V385H383V386H382V388H381V412H380V395H379V396H378V432H377V376H376V385H375V375H374V376H373V375H372V378H371V379H370V377H369V381H368V395H367V381H366V386H365V383H364V384H363V389H362V391H361V392H360V426H359V397H358V401H357V404H356V385H355V389H354V383H353V385H352V405H351V402H350V398H349V424H348V371H347V373H346V375H345V376H344V375H343V377H342V378H341V377H340V375H339V376H338V380H337V377H336V382H335V380H334V385H333V382H332V383H331V389H330V400H329V387H328V390H327V396H326V386H325V384H324H323V386H322V387H321V386H320V389H319V400H318V382H317V381H316V379H315V380H314V387H313V386H312V388H311V390H310V391H309V390H308V396H307V395H306V401H305V427H304V380H303V379H302V383H301V382H300V385H299V384H298V382H297V387H296V389H295V390H294V407H293V409H292V395H291V412H290V413H289V435H288V380H287V379H286V382H285V384H284V381H283V380H282V394H281V406H280V389H279V390H278V391H277V390H276V398H275V415H274V403H273V436H272V391H271V379H270V376H269H268V377H267V403H266V389H265V399H264V403H263V401H262V390H261V389H260V402H259V374H258V377H257H256V379H255V380H254V379H253V390H252V381H251V385H250V381H249V383H248V384H247V388H246H245V390H244V402H243V382H242H241V384H240H239V382H238V387H237V386H236V389H235V386H234V389H233V398H232V402H231V422H230V386H229V378H228V380H227V382H226V388H225V384H224V393H223V386H222V384H221V397H220V386H219V388H218V391H217V418H216V398H215V419H214V427H213V376H212V378H211V379H210V380H209V379H208V382H207V381H206V409H205V385H204V389H203V386H202V391H201V419H200V410H199V442H198Z" fill="#3232c8"/>
<path d="M198 343H199V336H200V337H201V336H202H203V337H204V339H205V340H206V339H207V340H208H209H210V341H211V342H212H213V341H214V333H215V336H216H217H218V338H219H220V339H221V340H222H223H224H225H226V341H227V342H228V341H229V342H230V334H231V336H232V337H233H234H235V338H236V339H237V340H238H239H240H241V341H242H243H244V336H245V337H246V338H247V339H248V340H249V341H250H251V340H252V342H253H254V341H255V342H256V343H257V341H258V342H259V339H260V338H261H262V340H263H264H265H266V342H267H268H269H270H271H272H273V334H274V336H275V335H276V338H277H278V339H279H280H281V340H282H283V341H284H285H286H287H288V334H289V335H290V337H291V336H292H293V339H294V338H295V339H296V340H297H298H299V341H300V342H301V341H302H303V342H304V333H305V336H306V337H307V336H308V338H309H310V339H311H312H313V340H314V341H315H316H317V342H318V338H319V337H320V338H321V339H322H323V341H324V340H325V341H326V336H327V338H328V339H329V340H330V339H331H332V341H333V340H334V341H335H336H337V342H338H339H340H341H342H343V343H344V342H345V343H346H347H348V336H349V335H350V337H351V338H352H353V339H354H355H356V335H357V334H358V336H359V337H360V338H361V337H362V339H363H364H365V341H366V339H367V340H368V341H369H370H371H372V342H373H374V343H375H376V342H377V334H378V336H379H380H381V338H382H383V339H384V340H385V339H386V340H387H388V341H389H390V342H391H392H393V333H394V335H395H396V336H397V337H398V339H399H400V338H401V340H402H403H404H405H406V341H407V333H408V336H409V335H410V337H411H412H413V338H414V340H415V339H416V340H417V341H418V340H419V341H420V342H421V341H422V342H423H424V337H425V335H426V336H427V337H428H429V339H430V338H431V340H432H433V341H434H435V342H436V340H437V342H438V341H439V342H440H441V343H442V342H443V343H444V342H445H446V343H447H448H449H450H451V344H452H453H454H455V343H456V344H457H458H459H460V345H461V344H462V345H463H464H465H466H467H468H469H470V346H471V345H472V346H473H474H475H476H477H478H479H480V345H481V346H482V345H483H484H485V344H486H487H488H489V342H490V343H491V341H492H493V340H494V341H495V339H496H497V336H498V335H499H500V336H501V337H502H503V338H504V337H505V333H506V336H507V335H508H509V336H510H511V338H512V334H513V333H514V334H515V335H516H517V337H518H519V338H520V332H521V335H522V336H523V335H524V336H525H526H527V337H528V331H529V333H530V334H531V336H532V337H533V335H534V337H535V336H536H537V332H538V333H539H540V334H541H542V336H543H544V335H545H546V337H547H548V338H549V336H550H551V338H552H553V336H554V335H555V336H556V337H557H558H559V339H560H561H562V340H563V339H564V340H565H566V341H567V340H568H569V341H570V340H571V341H572V342H573H574V341H575V342H576H577H578H579H580H581V343H582H583V342H584V343H585H586V344H587H588V343H589H590H591V344H592H593H594H595V345H596V344H597V345H598H599H600H601V346H602V343H603V344H604H605V345H606H607V346H608H609H610V347H611H612V348H613H614H615H616V331H617V329H618V330H619V329H620V330H621V328H622H623V331H624V328H625V331H626H627V328H628V331H629V329H630H631V330H632H633H634H635H636V329H637V330H638V331H639V330H640V328H641H642H643V330H644V329H645V328H646V330H647V328H648V331H649V329H650V330H651V328H652H653V329H654V328H655H656H657V330H658V331H659V328H660V330H661V329H662H663V331H664V329H665V328H666V329H667V328H668H669V330H670V329H671H672H673V328H674H675V330H676V331H677V329H678H679V328H680V330H681V328H682V330H683V328H684H685H686V329H687H688V328H689V329H690V330H691H692V331H693V328H694V329H695V330H696H697V329H698V330H699V329H700H701H702V330H703H704V328H705H706H707H708H709H710H711V329H712V328H713V329H714H715V330H716V329H717H718V328H719V330H720H721H722H723H724V328H725H726V331H727V330H728H729V328H730V327H731V329H732V330H733V331H734V329H735H736V331H737V329H738V331H739V328H740V331H741V328H742H743V330H744H745V329H746V331H747V329H748V328H749H750V329H751V330H752H753H754H755V328H756H757V329H758V328H759H760V330H761H762V328H763V330H764H765V329H766V330H767H768V331H769V329H770H771H772H773V330H774V328H775V330H776H777V328H778V330H779H780H781V328H782H783H784V330H785V328H786V331H787V328H788H789H790V330H791H792H793H794V328H795V329H796V328H797V330H798V331H799H800V328H801V329H802V328H803V330H804H805V328H806V329H807H808V328H809V330H810V331H811V328H812V329H813V328H814H815V330H816H817V328H818V330H819V328H820V329H821H822V331H823H824V329H825H826V331H827V330H828V329H829V332H830V331H831V330H832V332H833H834V330H835H836V331H837V333H838V332H839V333H840H841V332H842V333H843V332H844V333H845H846H847H848V334H849V333H850V334H851V335H852H853V334H854H855V332H856H857V335H858V333H859V335H860V333H861H862V334H863V333H864V334H865V335H866H867V334H868H869H870H871H872V335H873V334H874V335H875H876V334H877V335H878H879H880V334H881H882V336H883H884V335H885V336H886H887V335H888V336H889V335H890H891H892V334H893V335H894H895H896V334H897V333H898V334H899H900V335H901V334H902V335H903H904V334H905H906V335H907V333H908V334H909V336H910V335H911V333H912V335H913V334H914H915H916H917H918V336H919V335H920V333H921H922V336H923V335H924H925V336H926H927H928H929H930V335H931V334H932V336H933V334H934H935H936V335H937V334H938V336H939H940V334H941H942H943H944V335H945H946V334H947H948V335H949V336H950V335H951H952V334H953V335H954H955H956H957H958H959H960H961H962V336H963H964H965V335H966V334H967H968V335H969V334H970V336H971V335H972V334H973V335H974H975H976V336H977V335H978H979H980V336H981V335H982V334H983H984V336H985V335H986V336H987V334H988H989V335H990V334H991V336H992V335H993H994V334H995V336H996V335H997H998V334H999H1000V336H1001V335H1002V334H1003V335H1004V336H1005V334H1006V336H1007V335H1008V336H1009V334H1010V336H1011H1012V335H1013V336H1014V335H1015V334H1016V336H1017H1018V335H1019V336H1020V334H1021V336H1022V334H1023V336H1024H1025H1026H1027V335H1028H1029V336H1030H1031V335H1032V336H1033V334H1034H1035V336H1036H1037H1038V335H1039H1040V336H1041V335H1042V336H1043H1044V335H1045V336H1046H1047V334H1048V335H1049H1050V336H1051V335H1052V336H1053V334H1054V335H1055H1056V336H1057V335H1058V336H1059V335H1060V334H1061V335H1062V336H1063V335H1064V334H1065H1066V336H1067H1068V335H1069V336H1070H1071V335H1072V336H1073V335H1074H1075H1076V334H1077V336H1078H1079V334H1080V336H1081V335H1082V336H1083V334H1084V335H1085V334H1086V335H1087V336H1088H1089H1090V335H1091H1092V336H1093V335H1094V336H1095V334H1096V335H1097V336H1098H1099V335H1100V336H1101V335H1102V334H1103V336H1104H1105H1106H1107V334H1108V336H1109V335H1110V337H1111V334H1112V336H1113V335H1114V336H1115H1116V335H1117H1118V336H1119H1120H1121H1122H1123H1124H1125H1126V335H1127V336H1128V335H1129H1130H1131V336H1132H1133H1134H1135H1136V337H1137V336H1138V335H1139V337H1140H1141V336H1142H1143V337H1144V336H1145H1146H1147V335H1148V334H1149V336H1150H1151H1152H1153V334H1154V335H1155V336H1156V335H1157V334H1158V335H1159V336H1160V335H1161V334H1162V335H1163V334H1164H1165H1166V335H1167V336H1168V334H1169H1170H1171V335H1172H1171H1170V368H1169V367H1168V366H1167H1166V367H1165V365H1164V366H1163V367H1162H1161V366H1160V367H1159V365H1158V366H1157V365H1156V366H1155V365H1154V366H1153V365H1152V366H1151V365H1150V367H1149V365H1148V364H1147V367H1146V365H1145V366H1144V365H1143H1142V366H1141H1140V364H1139V366H1138V364H1137V365H1136V364H1135V365H1134H1133H1132H1131H1130H1129V366H1128V365H1127V366H1126V365H1125V364H1124H1123H1122V366H1121V364H1120V366H1119H1118V367H1117V364H1116V365H1115H1114V364H1113V365H1112V366H1111V365H1110V364H1109V366H1108V365H1107V364H1106V366H1105H1104H1103H1102H1101H1100H1099H1098V367H1097V365H1096V367H1095H1094V366H1093H1092H1091H1090V364H1089V365H1088V366H1087H1086H1085V367H1084H1083V365H1082H1081H1080H1079V367H1078V366H1077H1076V365H1075H1074V366H1073V367H1072V365H1071H1070H1069V367H1068V365H1067V366H1066V367H1065V366H1064H1063V365H1062H1061H1060V366H1059H1058H1057H1056V367H1055V366H1054V365H1053H1052H1051H1050H1049V366H1048V367H1047V366H1046H1045H1044V367H1043V366H1042V365H1041V367H1040V365H1039V367H1038V366H1037V365H1036V367H1035H1034V366H1033V367H1032V365H1031H1030H1029H1028H1027H1026V366H1025V365H1024V367H1023V365H1022V366H1021H1020V367H1019V366H1018V365H1017V366H1016V365H1015V367H1014V365H1013V367H1012V365H1011V366H1010V367H1009H1008V365H1007V366H1006V367H1005V366H1004V365H1003V366H1002H1001H1000V367H999V366H998V367H997V365H996V366H995H994V367H993V365H992V367H991H990V365H989V366H988V365H987V367H986H985V365H984V366H983H982V367H981V366H980V367H979V366H978H977V367H976V365H975V366H974V367H973V365H972V367H971V365H970V366H969V365H968V366H967V367H966V366H965V367H964V366H963V367H962V365H961V367H960V365H959V366H958V367H957V366H956H955V365H954V366H953H952V367H951V366H950V367H949H948H947H946V366H945V365H944V366H943V367H942V368H941V366H940H939V367H938H937V366H936H935V365H934V367H933V365H932V366H931H930V367H929V365H928H927V367H926V365H925V368H924V366H923H922V367H921V365H920V367H919V365H918V367H917V366H916H915V367H914H913V366H912V367H911V365H910V367H909V366H908V367H907V366H906V365H905V366H904V367H903V366H902V368H901V367H900H899H898H897H896V366H895V367H894H893V366H892V367H891H890V365H889H888V367H887V366H886V365H885H884V367H883V366H882H881H880H879V367H878H877H876V366H875V367H874V368H873V366H872V368H871V367H870H869H868V366H867H866V368H865V366H864H863H862V367H861V368H860V367H859V366H858V368H857H856V369H855V367H854V369H853H852V367H851V368H850V367H849V369H848V368H847H846H845V369H844V368H843H842V369H841V368H840H839H838V370H837V371H836H835V370H834V371H833V370H832V369H831V370H830V372H829V369H828V371H827V372H826V370H825H824H823V372H822V370H821V373H820H819V371H818V374H817V371H816V373H815V370H814V372H813V373H812V371H811V373H810H809V372H808V371H807H806V372H805V371H804V370H803V372H802V373H801H800V372H799V373H798V370H797V371H796V372H795V373H794V372H793V373H792H791H790H789V371H788V370H787H786V372H785V371H784V372H783V374H782V371H781V370H780V373H779V371H778H777V373H776V371H775V373H774V371H773V373H772H771V371H770H769V373H768V372H767V373H766H765V372H764V370H763V371H762H761H760H759V373H758V374H757V372H756V373H755V372H754H753V373H752H751H750V372H749V373H748V372H747V370H746V372H745V371H744V370H743V371H742V372H741H740V370H739V372H738V373H737V374H736V370H735V372H734V371H733V373H732V371H731H730H729V370H728V372H727V371H726H725H724V373H723V372H722H721V370H720V372H719V370H718V371H717V372H716V370H715V372H714V370H713V371H712H711H710V372H709H708V373H707V372H706H705V373H704V371H703H702V370H701V372H700V371H699H698H697V372H696V371H695V372H694H693V371H692H691H690H689V370H688V372H687V371H686V372H685H684H683H682V371H681H680H679H678V373H677V371H676V370H675V372H674H673V371H672V372H671H670H669V373H668V372H667V371H666V372H665V373H664V372H663V370H662V372H661V370H660V373H659H658H657V370H656V372H655V371H654V372H653H652H651V373H650V372H649V373H648V371H647V373H646V372H645H644V373H643V371H642V373H641V372H640V373H639V372H638V371H637V373H636V372H635H634V371H633V372H632V370H631V371H630H629V373H628V370H627V371H626H625V373H624V371H623V370H622V371H621H620V372H619H618V373H617V371H616V353H615H614H613H612V354H611H610H609V355H608H607V356H606H605V357H604H603V358H602V356H601H600H599H598H597V357H596V356H595V357H594H593H592H591V358H590V357H589V358H588V357H587V358H586H585H584H583H582H581V359H580V358H579V359H578H577V360H576H575V359H574H573H572H571V360H570V359H569V361H568V360H567H566V361H565V362H564H563H562V361H561V363H560V364H559V363H558H557H556V366H555V365H554V366H553V363H552V362H551V364H550H549V365H548H547V366H546V365H545V367H544V366H543H542H541V368H540V367H539H538H537V365H536H535V364H534V365H533V364H532V365H531V367H530H529V368H528V365H527V364H526H525V365H524V366H523V367H522V366H521V369H520V365H519V364H518H517V365H516H515V367H514V368H513H512V364H511V365H510V364H509V365H508V366H507H506H505V364H504H503V363H502H501V364H500V365H499H498V366H497V361H496H495V360H494V361H493V360H492H491V359H490V358H489H488V357H487H486V356H485V357H484V356H483H482V355H481H480H479H478H477H476H475H474V356H473H472V355H471H470V356H469H468H467H466H465V357H464V356H463V357H462H461H460V356H459V357H458H457H456H455H454V358H453H452V357H451H450H449H448V358H447H446H445H444H443H442V359H441H440H439V360H438V359H437V360H436V361H435V360H434V361H433H432H431V362H430H429V363H428H427V365H426V364H425H424V359H423V360H422V359H421H420V360H419V361H418V360H417V362H416H415H414V363H413H412V364H411H410V366H409V367H408V368H407V360H406H405H404H403H402V361H401H400V362H399H398V363H397V364H396H395V366H394V368H393V359H392H391H390H389V360H388V361H387H386V362H385H384H383V363H382H381V364H380V365H379H378V367H377V358H376H375V359H374V360H373V359H372H371V360H370H369V361H368V360H367H366V362H365H364V363H363H362H361V364H360V365H359H358V367H357H356V362H355V361H354V363H353V364H352H351V365H350H349V366H348V358H347H346H345H344V359H343V358H342V359H341H340H339V360H338H337V359H336V360H335V361H334V360H333H332V362H331V361H330V363H329V362H328H327V363H326V361H325V360H324V361H323H322V363H321V362H320H319V363H318V360H317V359H316V360H315H314V361H313H312V362H311V361H310V363H309V362H308V364H307H306V365H305V366H304V360H303H302H301V359H300V360H299V361H298V360H297V362H296H295H294V363H293V364H292H291V365H290V366H289H288V359H287V360H286H285H284H283H282V362H281V361H280H279V363H278V364H277H276H275V366H274V367H273V358H272V359H271H270H269H268V360H267H266H265V361H264H263V362H262H261V363H260H259V358H258V359H257H256H255H254V360H253H252V361H251H250H249V362H248H247H246H245V364H244V360H243V359H242V360H241V361H240H239H238H237V362H236V363H235V362H234V364H233V365H232H231H230V359H229H228V360H227V359H226V360H225V361H224V362H223V361H222H221V363H220V362H219V363H218H217V365H216V366H215V367H214V360H213H212V359H211V360H210H209H208V361H207V362H206V363H205V361H204V363H203V365H202H201H200V367H199V357H198Z" fill="#6464dc"/>
<path d="M198 478H199V517H200V511H201V535H202V503H203V506H204V540H205V524H206V531H207V543H208V545H209V547H210V549H211V538H212V533H213V551H214V484H215V513H216V521H217V523H218V532H219V530H220V533H221V522H222V534H223V543H224V539H225V544H226V543H227V544H228V498H229V500H230V520H231V498H232V528H233V532H234V535H235H236H237V539H238H239V534H240V532H241V545H242H243V522H244V508H245V532H246V537H247V536H248V518H249V540H250V538H251V544H252V532H253V548H254V547H255V549H256V550H257V539H258V549H259V513H260V533H261H262V538H263V535H264V544H265V521H266V545H267V547H268V545H269V549H270V529H271V551H272V550H273V552H274V482H275V517H276V525H277V526H278V527H279H280V534H281V523H282V538H283H284V543H285V540H286V546H287V537H288V549H289V492H290V516H291V520H292V529H293V530H294V535H295V530H296V533H297V536H298V538H299V540H300V546H301V547H302H303V494H304V514H305V494H306V527H307V526H308V493H309V507H310V469H311V479H312V485H313V524H314V522H315V529H316V528H317V532H318H319V536H320H321V540H322V545H323V541H324V543H325V544H326V546H327V550H328V548H329V552H330H331V554H332V553H333V555H334V556H335V555H336V557H337V556H338H339V559H340V556H341V557H342V558H343H344H345V560H346V561H347V559H348V477H349V504H350V522H351V524H352V533H353H354V532H355V536H356V501H357V504H358V520H359V518H360V526H361V524H362V525H363V530H364V531H365V530H366V538H367V536H368V538H369V541H370V543H371V546H372H373H374V545H375V549H376V548H377V549H378V494H379V499H380V530H381V524H382V531H383V536H384V533H385V535H386V537H387V522H388V544H389V543H390V545H391V546H392V531H393V548H394V486H395V519H396H397V527H398V529H399V526H400V533H401V536H402V533H403V536H404V538H405V544H406V542H407V547H408V477H409V494H410V502H411V524H412V522H413V529H414V526H415V533H416V536H417V537H418H419H420V543H421V541H422V529H423V500H424V502H425V515H426V523H427V524H428V525H429V530H430V533H431V506H432V516H433V536H434V540H435V539H436V544H437H438V536H439V546H440V522H441V546H442V550H443V549H444V548H445V550H446V554H447V552H448H449H450V554H451V555H452V557H453V556H454V551H455V558H456H457V560H458V559H459V560H460H461V562H462V561H463H464V558H465V562H466H467V563H468H469V558H470V565H471V564H472V565H473H474V566H475V567H476V568H477H478V567H479H480V568H481V566H482V565H483V562H484V566H485V567H486V566H487V557H488V563H489V560H490H491H492V559H493V558H494V555H495V557H496V556H497V522H498V520H499V537H500V539H501V543H502H503V525H504V530H505V534H506V537H507H508V540H509V546H510V521H511V528H512V533H513V536H514V539H515V521H516V541H517V527H518V524H519V532H520V522H521V534H522V539H523V541H524H525V537H526V548H527V512H528V527H529V530H530V539H531V522H532V538H533V542H534V522H535V526H536V535H537V532H538V538H539H540V519H541V521H542V528H543V531H544V537H545V534H546V539H547V541H548H549V542H550V531H551V546H552V550H553H554V542H555V534H556V539H557V540H558V541H559V544H560V525H561V548H562H563V550H564V536H565V549H566V546H567V555H568V554H569V555H570V557H571V558H572V557H573V558H574V557H575V559H576V561H577V562H578V560H579V562H580V558H581V562H582V563H583V562H584V563H585V564H586V563H587H588V562H589V563H590H591V564H592H593H594H595H596V565H597H598V564H599V566H600H601H602V541H603V552H604V556H605V559H606V561H607V563H608V562H609V564H610V565H611V567H612V568H613V566H614V570H615H616V536H617V500H618V534H619V531H620V510H621V529H622V534H623V526H624V535H625V534H626V539H627V521H628V528H629V531H630V520H631V534H632H633V535H634V534H635V539H636V541H637V536H638V530H639H640V519H641V524H642V523H643V530H644V510H645V531H646V528H647V530H648V535H649V525H650V528H651V534H652V533H653V526H654V533H655V518H656V521H657V529H658V490H659V520H660V515H661V516H662V520H663V501H664V509H665V517H666V528H667V531H668V527H669V525H670V495H671V527H672V525H673V475H674V533H675V531H676V532H677V526H678V538H679V532H680V526H681V532H682V518H683V530H684V522H685V518H686V527H687V521H688V527H689V534H690V521H691V526H692V524H693V517H694V514H695V524H696V526H697H698V524H699V528H700V526H701V540H702V521H703V529H704V532H705V520H706V519H707V514H708V518H709V492H710V520H711V508H712V509H713V527H714H715V524H716V538H717V522H718V516H719V521H720V514H721V524H722V512H723V519H724V524H725V523H726V524H727V530H728V526H729V520H730H731V515H732V535H733H734V505H735V531H736V512H737V519H738V526H739V533H740H741V532H742V541H743V530H744V541H745V531H746V540H747V538H748V526H749V525H750V528H751V537H752V526H753V519H754V526H755V512H756V522H757V525H758V498H759H760V500H761V529H762V536H763V521H764V533H765H766V519H767V534H768V533H769V527H770V536H771V534H772V529H773V542H774V541H775H776V534H777H778V524H779V520H780V527H781V489H782V512H783V503H784V528H785V523H786V519H787V520H788V517H789V516H790V535H791H792V529H793V536H794V528H795V529H796V540H797V538H798V520H799V526H800V533H801V525H802V537H803V512H804V532H805V540H806V536H807V544H808V520H809V542H810V534H811V537H812V539H813V525H814V544H815V538H816V541H817H818V545H819V544H820H821V533H822V534H823V532H824V538H825V535H826V540H827V541H828V543H829H830V545H831V515H832V531H833V510H834V546H835V521H836V539H837V507H838V482H839V519H840V537H841V542H842V537H843V534H844V543H845V535H846V538H847V537H848V540H849V543H850V547H851V549H852V543H853V553H854V539H855V547H856V542H857V550H858V533H859V544H860V547H861V543H862V547H863H864V545H865V536H866V540H867V535H868V542H869V538H870V542H871V541H872V536H873H874V527H875V547H876V534H877V516H878V536H879V533H880V497H881V548H882V544H883V547H884V556H885V559H886H887V562H888V555H889V559H890V548H891V551H892V543H893V553H894V549H895V522H896V544H897V525H898V547H899V526H900V534H901V531H902V545H903V541H904V525H905V542H906V547H907V544H908H909V550H910V549H911V536H912V538H913V525H914V547H915V545H916V538H917V548H918V550H919V545H920V546H921H922V541H923V548H924V544H925V545H926V544H927V550H928V553H929V547H930V550H931V548H932V541H933V552H934V555H935V553H936V548H937V549H938V545H939V539H940V554H941V541H942V546H943V547H944H945V535H946V530H947V549H948V535H949V541H950V544H951H952V546H953V521H954V547H955V551H956V541H957V543H958V548H959V545H960V514H961V539H962V549H963V546H964V545H965V539H966V552H967V558H968V554H969V557H970V552H971V554H972H973V553H974V544H975V535H976V534H977V543H978V549H979V548H980V545H981V543H982V542H983V543H984V549H985V542H986V543H987H988V544H989V553H990V548H991V549H992V539H993V544H994V532H995V544H996V539H997V545H998V534H999H1000V544H1001V539H1002V543H1003V538H1004V545H1005V539H1006V552H1007V554H1008V551H1009V539H1010V552H1011V551H1012V531H1013V555H1014V558H1015V548H1016V557H1017V553H1018V541H1019V552H1020V553H1021V551H1022V553H1023V549H1024V547H1025V544H1026V512H1027V548H1028V550H1029V548H1030V547H1031V541H1032V547H1033V524H1034V526H1035V533H1036V536H1037V535H1038V537H1039V541H1040V543H1041V541H1042V533H1043H1044V545H1045V548H1046V541H1047V554H1048V543H1049V537H1050V558H1051V540H1052V548H1053V552H1054V549H1055V527H1056V524H1057V552H1058V544H1059V545H1060H1061V539H1062V517H1063V546H1064V534H1065V539H1066V549H1067V531H1068V552H1069V543H1070V555H1071V549H1072V555H1073V551H1074V546H1075V555H1076H1077V553H1078V551H1079V553H1080V547H1081V540H1082V544H1083H1084V549H1085V541H1086V536H1087V544H1088V553H1089V540H1090V554H1091V543H1092V548H1093V552H1094V542H1095V550H1096V544H1097V540H1098V541H1099V547H1100V552H1101V549H1102V547H1103V549H1104V544H1105V542H1106V534H1107V526H1108V549H1109V541H1110V532H1111V539H1112V529H1113V542H1114V540H1115V547H1116V535H1117V543H1118V544H1119H1120V542H1121V538H1122V545H1123V509H1124V536H1125H1126V530H1127V522H1128V537H1129V538H1130V551H1131V545H1132V537H1133V540H1134V533H1135V542H1136V543H1137V542H1138V509H1139V538H1140V524H1141V533H1142V537H1143V541H1144V544H1145V543H1146V547H1147V542H1148V539H1149V545H1150V549H1151V554H1152V548H1153H1154V545H1155V547H1156V543H1157V531H1158V541H1159V532H1160V540H1161V546H1162V548H1163H1164V550H1165V552H1166V548H1167V556H1168V549H1169V551H1170V554H1171V551H1172H1171V633H1170V624H1169V619H1168V618H1167V642H1166V624H1165V625H1164V651H1163V672H1162V658H1161V623H1160V620H1159V623H1158V621H1157V618H1156V605H1155V608H1154V606H1153V616H1152V608H1151V622H1150V601H1149V607H1148V619H1147V631H1146V606H1145V640H1144V609H1143V618H1142V606H1141V609H1140V612H1139V614H1138V610H1137V607H1136V606H1135V609H1134V615H1133V605H1132V600H1131V614H1130V601H1129V603H1128V622H1127V641H1126V620H1125V645H1124V647H1123V627H1122V629H1121V624H1120V618H1119V620H1118V647H1117V628H1116V619H1115H1114V610H1113V619H1112V606H1111H1110V611H1109V619H1108V632H1107V625H1106V617H1105V622H1104V646H1103V613H1102V609H1101V622H1100V606H1099V603H1098V611H1097V609H1096V637H1095V618H1094V613H1093V609H1092V602H1091V600H1090V605H1089V598H1088V609H1087V607H1086V613H1085V606H1084V612H1083V609H1082V660H1081V657H1080V618H1079V615H1078V614H1077V613H1076V624H1075V642H1074V619H1073V634H1072V614H1071V613H1070V618H1069V603H1068V610H1067V614H1066V617H1065V616H1064V610H1063V623H1062V641H1061V635H1060V651H1059V631H1058V623H1057V626H1056V670H1055V620H1054V614H1053V613H1052H1051V612H1050V611H1049V621H1048V631H1047V614H1046V615H1045V621H1044V626H1043V622H1042V620H1041V625H1040V614H1039V629H1038V625H1037V621H1036V610H1035V623H1034V628H1033V642H1032V613H1031V614H1030V609H1029V651H1028V622H1027V619H1026V633H1025V614H1024V617H1023V627H1022V606H1021V618H1020V613H1019V647H1018V605H1017V619H1016V603H1015V624H1014V608H1013V627H1012V614H1011V622H1010V644H1009V619H1008V651H1007V620H1006V668H1005V619H1004V620H1003H1002V619H1001H1000V611H999V628H998V611H997V624H996V612H995V615H994V616H993V615H992V636H991V612H990V616H989V625H988V632H987V622H986V632H985V620H984V619H983V611H982V635H981V618H980V609H979V606H978V611H977V623H976V610H975V636H974V622H973V632H972V627H971V621H970V613H969V629H968V640H967V617H966V618H965V613H964V630H963V616H962V621H961V608H960V613H959V603H958V607H957V626H956V610H955V647H954V629H953V639H952V659H951V637H950V668H949V638H948V633H947V641H946V628H945V618H944V630H943V625H942H941V614H940V619H939V617H938V610H937V612H936V619H935V613H934V619H933V604H932V606H931V603H930V612H929V617H928V610H927V614H926V615H925V629H924V623H923V617H922V604H921V626H920V605H919V612H918V613H917V602H916V610H915V604H914V609H913V608H912V632H911V614H910V625H909V622H908V619H907V624H906V617H905V614H904V608H903V621H902V605H901V610H900V634H899V612H898V627H897V635H896V631H895V636H894V659H893V637H892V609H891V612H890V630H889V600H888V599H887V603H886V594H885V598H884V600H883V602H882V615H881V621H880V623H879V617H878V638H877V623H876V640H875V642H874V666H873V623H872V633H871V630H870V626H869V617H868V626H867V615H866V653H865V654H864V642H863V624H862V629H861V630H860V664H859V629H858V631H857V623H856V617H855V652H854V631H853V635H852V665H851V639H850V640H849V630H848V632H847V631H846V635H845V614H844V625H843V643H842V623H841V612H840V615H839V661H838V620H837V617H836V625H835V642H834V623H833V638H832V635H831V618H830V622H829V616H828V618H827V613H826V614H825V628H824V623H823V626H822V640H821V654H820V633H819V623H818V626H817V631H816V637H815V616H814V627H813V622H812V630H811V621H810V622H809V619H808V617H807H806V620H805V619H804V620H803V621H802V623H801V621H800V613H799V618H798V623H797V610H796V626H795V622H794V626H793V621H792V653H791V613H790V627H789V642H788V622H787V617H786V632H785V633H784V631H783V621H782V641H781V627H780V633H779V622H778V638H777V631H776V644H775V641H774V639H773V625H772V630H771V639H770V626H769V627H768V630H767H766V623H765V647H764V631H763V629H762V634H761V627H760V619H759V621H758V615H757V614H756V616H755V614H754V632H753V629H752V633H751V629H750V646H749V627H748V647H747V629H746V633H745V624H744V635H743V629H742V638H741V634H740V633H739V634H738V632H737V630H736V637H735V643H734V622H733V625H732H731H730V619H729V620H728V619H727V622H726V617H725V631H724V624H723V635H722V663H721V646H720V634H719V627H718V633H717V623H716V627H715V632H714V640H713V627H712V630H711V641H710V645H709V636H708V647H707V651H706V630H705V634H704V646H703V627H702V625H701V626H700V623H699V625H698V632H697V654H696V623H695H694V626H693V642H692V621H691V639H690V626H689V630H688V637H687V632H686H685V624H684V626H683V630H682V635H681V663H680V653H679V639H678V628H677V633H676V632H675V638H674V635H673V623H672V640H671V627H670V640H669V629H668V618H667V619H666V659H665V633H664H663V621H662V624H661V625H660V619H659H658V613H657V614H656V621H655V620H654V632H653V644H652V652H651H650V634H649V644H648V643H647V665H646V630H645V619H644V621H643V631H642V624H641V620H640V631H639V623H638V625H637V624H636H635V627H634V622H633V628H632V630H631V632H630V634H629V638H628V646H627V632H626V640H625V632H624V658H623V628H622V631H621V645H620V639H619V623H618V671H617V618H616V581H615H614H613V583H612V584H611H610V586H609H608V587H607V588H606V590H605V598H604V593H603V607H602V587H601V586H600V587H599V586H598V587H597H596V588H595V587H594H593V588H592H591V587H590V588H589H588H587V590H586V589H585H584H583V591H582H581V590H580H579V592H578V590H577V599H576V592H575V593H574V592H573V594H572V604H571V602H570V593H569H568V603H567V597H566H565V602H564V597H563V599H562V598H561V600H560V601H559H558V608H557V607H556V608H555V614H554V609H553V602H552V604H551V601H550V603H549V606H548V607H547V606H546V607H545V609H544H543V615H542V617H541V623H540V604H539V606H538V632H537V609H536V614H535V623H534V606H533V616H532V605H531V627H530V615H529V612H528V632H527V602H526H525V605H524V607H523V605H522V610H521V634H520V613H519V623H518V610H517V606H516H515V625H514V613H513V615H512V612H511V629H510V610H509V608H508V610H507V607H506V608H505V614H504V623H503V604H502H501V619H500V624H499V612H498V629H497V594H496V595H495H494V593H493V592H492V591H491V588H490V589H489V587H488V585H487V584H486H485H484V587H483V588H482V584H481H480H479V583H478H477V585H476V584H475H474H473V586H472H471V585H470V587H469H468H467H466H465V589H464H463V588H462V590H461V588H460V590H459V589H458V590H457V592H456V591H455V596H454V592H453V598H452V592H451V593H450V604H449V594H448V597H447V595H446V598H445V597H444V599H443H442V602H441V604H440V609H439V601H438V617H437V606H436V614H435V606H434V607H433V613H432H431V612H430H429V616H428V619H427V620H426V624H425V627H424V648H423V606H422V604H421V606H420V609H419V607H418V608H417V609H416V612H415V621H414V614H413V618H412V619H411V621H410V627H409V650H408V616H407V609H406V608H405V611H404V621H403V610H402V638H401V615H400V620H399V621H398H397V644H396V624H395V661H394V611H393V603H392H391V608H390V605H389V607H388V611H387H386V612H385V610H384V615H383V619H382V617H381V634H380V622H379V653H378V601H377H376V603H375H374H373V612H372V607H371V624H370V609H369V607H368V606H367V612H366V608H365V611H364V612H363V614H362V618H361H360V620H359V626H358V629H357V639H356V610H355V611H354V612H353V611H352V615H351V621H350V618H349V648H348V594H347V595H346H345H344V596H343V598H342V597H341H340V599H339V597H338V599H337V597H336V607H335V602H334V599H333V601H332V603H331H330V605H329V602H328V621H327V606H326V604H325V609H324V606H323V621H322V610H321V611H320V628H319V613H318V618H317V620H316V623H315V621H314V625H313V632H312V635H311V639H310V616H309V622H308V623H307V626H306V624H305V639H304V660H303V606H302V609H301H300V615H299V614H298V622H297V618H296H295H294V626H293V625H292V635H291V657H290V678H289V617H288V605H287V608H286H285V607H284V612H283H282V615H281V617H280V620H279V644H278V623H277V625H276V645H275V664H274V601H273V616H272V605H271V604H270H269V606H268V631H267V608H266V612H265V610H264H263V614H262V620H261V624H260V633H259V603H258V601H257V604H256V603H255V605H254V607H253V611H252V613H251H250V631H249V612H248V619H247V636H246V631H245V624H244V633H243V605H242V608H241V607H240V609H239H238V610H237V630H236V615H235V620H234H233V624H232V621H231V635H230V626H229V661H228V623H227V620H226V610H225V612H224H223V615H222H221V618H220V616H219V619H218V621H217V631H216V637H215V673H214V604H213H212V602H211V608H210V619H209V605H208V617H207V611H206V625H205V612H204V615H203H202V620H201V629H200V644H199V671H198Z" fill="#3232c8"/>
<path d="M198 568H199V557H200V561H201V560H202V562H203H204V563H205V562H206V564H207H208H209H210H211V565H212H213H214V558H215H216V559H217V560H218V559H219V562H220V563H221V562H222V563H223H224V565H225H226H227H228V566H229V558H230H231V560H232H233H234V561H235V563H236V564H237H238H239H240H241V566H242V565H243V566H244V559H245V562H246V563H247V562H248V564H249H250H251H252V565H253V566H254V564H255V566H256H257H258H259V560H260V561H261V563H262V562H263H264V563H265V564H266H267V565H268H269V566H270V565H271H272V566H273H274V556H275V559H276V560H277V561H278V562H279V561H280V562H281V563H282H283V564H284V565H285H286H287V566H288V565H289V556H290V557H291V559H292H293V560H294V561H295V562H296V563H297H298V564H299V565H300V564H301V565H302V564H303V565H304V559H305V558H306V560H307V561H308V562H309V561H310V557H311V556H312V558H313V561H314V560H315V561H316H317V563H318H319V564H320H321H322H323V565H324V566H325H326V565H327V566H328H329V567H330V566H331V567H332V566H333V567H334V566H335V567H336H337H338V568H339V567H340H341H342V568H343V567H344H345H346H347V568H348H349V560H350H351H352V562H353V561H354V563H355V562H356V556H357V557H358V559H359V560H360V561H361V560H362V561H363V562H364H365H366V564H367V565H368H369V564H370V565H371V566H372V565H373V566H374H375V567H376V565H377V566H378V559H379V560H380V559H381V562H382V561H383V563H384H385V564H386V563H387V565H388V564H389V565H390H391H392H393V566H394V556H395V559H396H397V561H398V560H399V561H400V563H401H402V564H403V565H404V564H405V565H406H407V566H408V559H409V558H410V560H411H412V562H413H414V563H415H416H417V564H418H419H420H421V565H422V566H423H424V558H425V560H426H427V562H428H429V563H430H431V564H432H433H434V565H435V566H436H437V565H438V566H439H440H441H442H443V567H444H445V568H446V567H447H448V568H449H450V567H451H452V568H453H454H455H456H457H458V569H459H460V568H461V569H462H463V570H464V569H465V570H466H467H468H469H470V571H471V570H472V571H473V570H474V571H475H476H477H478H479H480V570H481H482H483H484V569H485H486H487H488V568H489V567H490H491V565H492H493H494V563H495H496H497V556H498H499V559H500H501V560H502V559H503V556H504H505V557H506H507V560H508V559H509H510V555H511H512V558H513V559H514H515V560H516V558H517V559H518V557H519V556H520H521V559H522H523V560H524V561H525V560H526V561H527V556H528V555H529V556H530H531V559H532H533V558H534V555H535H536V558H537V557H538V559H539V558H540V553H541V554H542V557H543H544V558H545H546H547H548V559H549V561H550V559H551V560H552H553H554V562H555V558H556V560H557V559H558V560H559V561H560H561H562V562H563H564V564H565V563H566V564H567H568V565H569V564H570V565H571V566H572V565H573V566H574H575H576V565H577V567H578V566H579H580V567H581H582H583H584H585V566H586V567H587H588H589V568H590V567H591V568H592H593H594H595H596H597V569H598H599H600V568H601V569H602V566H603V567H604V568H605H606V569H607V570H608H609V571H610H611V572H612H613V573H614H615H616V552H617V554H618V553H619H620V554H621V553H622V552H623V551H624V554H625V552H626V551H627V553H628V552H629H630V554H631V553H632V552H633H634H635V555H636V554H637H638H639H640V552H641V554H642V555H643V553H644H645V552H646V553H647V554H648V552H649V554H650V553H651H652V552H653V553H654V551H655V553H656H657V554H658V552H659V555H660V554H661V553H662V552H663V555H664V552H665V554H666V552H667V553H668V552H669V553H670V552H671V553H672V554H673V552H674H675V555H676V551H677V553H678V554H679H680H681V552H682V555H683V552H684V551H685V552H686V555H687V553H688H689H690V552H691V553H692V552H693V554H694V553H695H696H697H698V551H699V553H700V554H701H702V553H703V555H704V553H705V555H706V553H707H708V554H709V553H710V554H711V552H712V553H713V552H714V555H715V553H716V552H717V555H718V554H719V553H720H721V552H722V554H723H724V553H725V551H726V555H727V553H728V552H729V554H730V553H731H732H733V552H734H735V554H736V553H737V551H738V555H739H740V554H741V552H742V553H743V554H744V552H745V555H746V552H747V551H748V552H749V553H750V552H751H752H753V553H754H755V552H756V554H757V551H758V554H759H760V552H761V554H762V553H763V554H764V555H765V552H766V553H767V555H768V553H769V555H770V553H771H772V552H773V551H774V552H775V554H776V552H777H778V555H779V554H780V553H781V552H782V554H783V553H784V554H785H786H787V555H788V552H789H790V554H791V555H792V553H793V552H794V554H795H796H797V552H798H799H800V554H801H802V555H803V552H804V554H805V552H806V554H807H808V552H809H810H811V553H812V552H813V553H814V552H815V554H816H817H818V553H819V554H820H821H822H823V552H824V553H825V552H826V554H827V553H828V554H829V555H830V553H831V554H832V555H833V554H834H835V555H836H837H838V556H839V554H840V556H841V555H842V556H843V557H844V558H845V557H846V559H847V556H848V559H849H850V558H851V559H852V557H853V559H854V557H855V559H856V558H857V559H858V558H859H860V559H861V558H862H863V559H864V558H865V560H866V558H867V559H868V560H869V558H870H871V560H872V558H873V559H874V558H875V559H876H877H878V558H879V559H880H881V560H882H883V561H884V562H885V561H886V560H887V563H888V562H889V561H890V560H891V559H892V560H893V559H894V560H895V561H896V558H897V559H898V560H899H900H901V561H902V559H903H904V561H905V559H906H907V561H908V559H909V560H910V558H911V559H912V558H913V559H914V560H915V559H916V560H917H918H919H920V561H921V560H922H923V559H924V560H925V558H926H927V560H928H929V561H930H931V560H932V559H933H934V560H935V561H936V559H937V560H938V559H939V561H940V560H941V559H942V560H943H944V561H945V558H946V560H947H948V559H949V560H950V558H951V560H952V558H953V559H954V558H955V560H956V559H957V561H958V559H959V560H960V559H961H962V558H963V561H964V559H965H966V560H967V561H968V559H969V558H970H971V559H972V560H973H974V559H975H976H977V560H978V559H979V560H980V561H981V559H982H983H984V558H985H986V560H987V558H988V559H989V558H990V559H991V560H992V559H993V561H994V559H995V560H996V561H997H998V560H999V559H1000V560H1001H1002V559H1003V561H1004V559H1005V560H1006V559H1007V560H1008V559H1009V560H1010H1011H1012H1013H1014V561H1015V559H1016H1017V560H1018H1019V559H1020V560H1021V561H1022V559H1023V560H1024V559H1025H1026H1027V560H1028V559H1029V560H1030V558H1031V560H1032V559H1033V560H1034H1035V561H1036V560H1037H1038H1039H1040H1041V559H1042H1043V560H1044H1045H1046H1047V561H1048H1049V560H1050V559H1051H1052V560H1053V559H1054H1055H1056V560H1057V558H1058V559H1059H1060H1061V561H1062V559H1063H1064V558H1065V560H1066H1067V559H1068H1069V560H1070H1071H1072V558H1073V559H1074H1075V560H1076V561H1077V560H1078H1079V559H1080H1081V560H1082V561H1083V560H1084V558H1085V559H1086H1087V558H1088V560H1089H1090H1091V559H1092H1093V560H1094V559H1095V560H1096V559H1097V561H1098H1099V560H1100V561H1101V560H1102V559H1103V561H1104V559H1105V560H1106V559H1107H1108V560H1109V559H1110H1111H1112V560H1113H1114H1115H1116H1117H1118V559H1119H1120V561H1121V558H1122V560H1123V559H1124V561H1125V559H1126H1127H1128V561H1129V559H1130V560H1131H1132V558H1133V561H1134V559H1135V560H1136V559H1137H1138H1139H1140H1141V560H1142V561H1143V559H1144H1145H1146V560H1147V561H1148V558H1149V559H1150H1151H1152H1153V560H1154H1155V561H1156V560H1157H1158H1159H1160H1161V559H1162V560H1163H1164H1165V559H1166V560H1167H1168V558H1169V560H1170H1171H1172H1171V592H1170V593H1169V590H1168V592H1167H1166V591H1165H1164V592H1163H1162V590H1161H1160V591H1159V592H1158H1157V591H1156H1155V592H1154V591H1153H1152V592H1151V591H1150V592H1149V593H1148V592H1147V591H1146H1145H1144H1143V592H1142V590H1141V591H1140H1139H1138V592H1137H1136V591H1135V592H1134V591H1133V592H1132V593H1131V592H1130V591H1129V592H1128V591H1127V592H1126H1125V590H1124V591H1123V592H1122V590H1121V592H1120H1119V591H1118V592H1117V591H1116H1115H1114V593H1113V592H1112V593H1111V592H1110V591H1109V592H1108V591H1107V590H1106V592H1105V593H1104V592H1103V591H1102H1101V590H1100V593H1099V591H1098V590H1097V591H1096V592H1095V591H1094H1093V592H1092H1091H1090H1089V590H1088V592H1087H1086H1085V591H1084H1083H1082V592H1081H1080V591H1079V593H1078H1077V592H1076V591H1075H1074H1073V593H1072V590H1071V592H1070V591H1069H1068H1067V592H1066V591H1065H1064V592H1063V593H1062V591H1061V592H1060V593H1059V592H1058H1057H1056V591H1055V592H1054H1053H1052V591H1051V592H1050H1049V591H1048V590H1047V592H1046V591H1045H1044V592H1043V590H1042V592H1041V591H1040V592H1039H1038V590H1037V591H1036V593H1035V592H1034V591H1033H1032H1031V592H1030H1029V590H1028V592H1027V593H1026V591H1025V592H1024V591H1023H1022V592H1021V590H1020V592H1019V593H1018V592H1017V591H1016H1015H1014H1013V590H1012V591H1011V592H1010V590H1009V591H1008H1007V593H1006V592H1005H1004H1003H1002H1001V591H1000V592H999H998V591H997V592H996V591H995H994H993V592H992V591H991V590H990H989V591H988H987V592H986V591H985V590H984V592H983V591H982H981H980H979H978V592H977V591H976V592H975H974V591H973H972V593H971V590H970V591H969V592H968V591H967V593H966V592H965V591H964V592H963H962V593H961V592H960H959H958V593H957V591H956V592H955V591H954V590H953V592H952V593H951V591H950V590H949V592H948H947V591H946H945H944H943V592H942V591H941V593H940H939V591H938V590H937V591H936H935V592H934V591H933V592H932V593H931V592H930V593H929V592H928V590H927V591H926V593H925V592H924V593H923H922V590H921V592H920V591H919H918V592H917H916H915H914V591H913V592H912V591H911V590H910V591H909V590H908V592H907V593H906V592H905V590H904V592H903V590H902V592H901H900H899V590H898V591H897V593H896V591H895V592H894V590H893V591H892V590H891V592H890V589H889H888H887V591H886V589H885V591H884V592H883H882V591H881H880V592H879H878V593H877V592H876H875H874H873H872V593H871V592H870V591H869V593H868H867V591H866H865V593H864H863V592H862V591H861V593H860V591H859V593H858H857V594H856H855V592H854V593H853V591H852V594H851H850V593H849H848H847V594H846H845V595H844V593H843V594H842V595H841V594H840H839V597H838V595H837V596H836V597H835V598H834V596H833V597H832H831H830V598H829V600H828V598H827H826V599H825V597H824V596H823V598H822V597H821V596H820V599H819V598H818V597H817V599H816V598H815V599H814V596H813V600H812V597H811H810H809V599H808V598H807V597H806V598H805V597H804V599H803H802V597H801V599H800H799H798V597H797H796H795V599H794V600H793V598H792H791V597H790H789V598H788V597H787V599H786V596H785V597H784V598H783V599H782H781H780V597H779V598H778V599H777V598H776V597H775V599H774V597H773V599H772V597H771V599H770V598H769V597H768V599H767V596H766V599H765V597H764H763V598H762V597H761H760H759V598H758H757H756V596H755V598H754V597H753H752V596H751V598H750V599H749V597H748V596H747V598H746V597H745H744V596H743V599H742V598H741V597H740V598H739H738H737V597H736V598H735H734H733V599H732V597H731H730V598H729V596H728V599H727H726V600H725V599H724V600H723V597H722V596H721V599H720V600H719V597H718V599H717V597H716V599H715H714V600H713V596H712V599H711V598H710V599H709V600H708V599H707V598H706H705H704V597H703H702V598H701V599H700V598H699V599H698V598H697V599H696H695V597H694V599H693V597H692V599H691V598H690V599H689H688V597H687V599H686H685H684H683V597H682H681V598H680V597H679V599H678V598H677V599H676V597H675V598H674H673V596H672V599H671V597H670V596H669V597H668V598H667H666V596H665V600H664V598H663V597H662V596H661V598H660V600H659V598H658V599H657V598H656V597H655V596H654V599H653V598H652V596H651V598H650V599H649V598H648V597H647V596H646H645V599H644H643H642H641V598H640V599H639V600H638V598H637V597H636H635V599H634V597H633V598H632H631V597H630V598H629H628V597H627H626V599H625H624V596H623V599H622V598H621V597H620V596H619V598H618V599H617V598H616V578H615H614V579H613H612H611V580H610H609H608V581H607V582H606V583H605H604V584H603V585H602V582H601H600H599V583H598V582H597V583H596V582H595H594V583H593V584H592V583H591H590V584H589V583H588V584H587H586V583H585V584H584H583H582H581H580V585H579H578V586H577H576H575H574H573H572V587H571V586H570V587H569H568H567V588H566V587H565V588H564V587H563V588H562V589H561V588H560V590H559V591H558H557V592H556H555V589H554H553V591H552V590H551V591H550V590H549V592H548V593H547H546H545V594H544V595H543V594H542V598H541V595H540V594H539V593H538V595H537V594H536V595H535V598H534V591H533V593H532H531V594H530V593H529V596H528V597H527V591H526V592H525H524V591H523H522V593H521V594H520H519V596H518V590H517V591H516H515V592H514H513V594H512V595H511V597H510V592H509V590H508V593H507V594H506H505H504V595H503V591H502V593H501V591H500V594H499H498V595H497V589H496V588H495V587H494H493V585H492V586H491V584H490H489V583H488H487V582H486H485V581H484H483H482H481V580H480H479H478H477H476H475H474V581H473H472H471H470H469H468H467V582H466H465V581H464H463V582H462H461H460H459H458V583H457H456H455H454H453H452H451H450V584H449H448H447H446H445H444H443V585H442V584H441V585H440H439H438V586H437H436H435H434V587H433V586H432V588H431V587H430V589H429V588H428V589H427V591H426V592H425H424V586H423H422H421H420V587H419V586H418V587H417V588H416V589H415H414V590H413H412V591H411V592H410V594H409V593H408V586H407H406V587H405V588H404V587H403V588H402H401V589H400H399V590H398H397V591H396H395V594H394V586H393V585H392V586H391V585H390V586H389H388V587H387V588H386V587H385V589H384V590H383H382V589H381V591H380H379V592H378V585H377V586H376V584H375V586H374V585H373V586H372V585H371V586H370H369V587H368V586H367V587H366V588H365H364H363V590H362H361V591H360V592H359V593H358V594H357V596H356V588H355V589H354H353V590H352H351H350V593H349V584H348H347H346H345V583H344V584H343V583H342V584H341H340H339H338V583H337V584H336V585H335V584H334V585H333V584H332V585H331V584H330H329V585H328H327V586H326V585H325V586H324H323V587H322H321V588H320H319H318V589H317H316V590H315H314V592H313H312V594H311V593H310V589H309V590H308V591H307H306V593H305H304V586H303H302H301H300V588H299H298H297V590H296V589H295V590H294V591H293V592H292H291V594H290V595H289V586H288H287V587H286V586H285V588H284H283H282V589H281H280H279H278V591H277V593H276H275H274V584H273V585H272V586H271H270H269H268V587H267H266V588H265H264V587H263V589H262H261V591H260V590H259V585H258H257V586H256H255H254H253H252V587H251H250V588H249V589H248V588H247V589H246V590H245V591H244V586H243H242H241H240H239V588H238V587H237V588H236V589H235H234V591H233H232V590H231V593H230V595H229V586H228V587H227V586H226H225V588H224V587H223V588H222H221V590H220H219V591H218H217H216V592H215V593H214V585H213V586H212H211V587H210V586H209V588H208V586H207V588H206H205H204V590H203H202H201V591H200H199V583H198Z" fill="#6464dc"/>
<rect x="615" y="243" width="1.6" height="215" fill="#2a1010"/>
<rect x="615" y="469.5" width="1.6" height="212.5" fill="#2a1010"/>
</svg><!-- annotations -->
<div class="t" style="left:25.5px;top:753.5px;font-size:29.5px;font-weight:bold;color:#000;letter-spacing:1.93px;-webkit-text-stroke:1.3px #000">New Versions</div>
<div class="t" style="left:504.6px;top:771.5px;font-size:28px;font-weight:bold;color:#e5151e;letter-spacing:3.3px;-webkit-text-stroke:1.3px #e5151e">No highlight</div>
<svg class="a" style="left:590px;top:690px" width="60" height="65">
 <path d="M9.8 32.6 L24.2 7.7 L45.3 31" fill="none" stroke="#e5151e" stroke-width="2.6" stroke-linecap="round" stroke-linejoin="round"/>
 <path d="M28 31.5 C27.5 40 25.5 50 23.5 58.8" fill="none" stroke="#e5151e" stroke-width="2.6" stroke-linecap="round"/>
</svg>
<!-- scrollbar -->
<div class="a" style="left:0;top:888px;width:1172px;height:27px;background:#f0f0f0;border-top:1px solid #fafafa"></div>
<div class="a" style="left:230px;top:890.5px;width:183px;height:21px;background:#cdcdcd"></div>
<svg class="a" style="left:205px;top:888px" width="25" height="26">
 <polyline points="14.8,8.8 8,13.2 14.8,17.8" fill="none" stroke="#5a5a5a" stroke-width="2.8"/>
</svg>
<!-- selection toolbar -->
<div class="a" style="left:0;top:914px;width:1172px;height:85px;background:#c9c9c9"></div>
<div class="a" style="left:1px;top:915.5px;width:785px;height:81.5px;background:#f7f8fc"></div>
<div class="a" style="left:15px;top:915.5px;width:1.6px;height:81.5px;background:#cdcdcd"></div>
<div class="grip" style="left:6px;top:925px;height:70px"><i style="top:0px"></i><i style="top:6px"></i><i style="top:12px"></i><i style="top:18px"></i><i style="top:24px"></i><i style="top:30px"></i><i style="top:36px"></i><i style="top:42px"></i><i style="top:48px"></i><i style="top:54px"></i><i style="top:60px"></i></div>
<div class="t" style="left:24.5px;top:927.5px;font-size:17.5px;color:#1a1a1a;letter-spacing:0.4px">Project Rate (Hz)</div>
<div class="t" style="left:182px;top:927.5px;font-size:17.5px;color:#1a1a1a;letter-spacing:1px">Snap-To</div>
<div class="a" style="left:173px;top:923px;width:1.2px;height:23px;background:#8a8a8a"></div>
<div class="a" style="left:173px;top:965px;width:1.2px;height:23px;background:#8a8a8a"></div>
<div class="a" style="left:294px;top:923px;width:1.2px;height:23px;background:#8a8a8a"></div>
<div class="a" style="left:294px;top:965px;width:1.2px;height:23px;background:#8a8a8a"></div>
<div class="a" style="left:25.5px;top:957.5px;width:138px;height:34px;background:#fff;border:1px solid #7a7a7a"></div>
<div class="t" style="left:33.5px;top:966px;font-size:16.8px;color:#111">44100</div>
<div class="combo" style="left:183px;top:957.5px;width:102px;height:34px"><div class="t" style="left:5px;top:8px;letter-spacing:1px">Off</div></div>
<div class="combo" style="left:304.5px;top:916px;width:477px;height:34px"><div class="t" style="left:5.5px;top:8.2px;font-size:17px;letter-spacing:0.25px">Start and End of Selection</div></div>
<svg class="a" style="left:0;top:900px" width="800" height="100">
 <g fill="none" stroke="#505050" stroke-width="1.3">
  <polyline points="144.5,72 150.3,78.5 156.1,72"/>
  <polyline points="264.9,72 271.2,78.5 277.6,72"/>
  <polyline points="762,30.5 768.6,37.3 775.2,30.5"/>
 </g>
</svg>
<!-- status bar -->
<div class="a" style="left:0;top:999px;width:1172px;height:23px;background:#f0f0f0"></div>
<div class="a" style="left:14px;top:1002px;width:1px;height:20px;background:#d4d4d4"></div>
<div class="a" style="left:270px;top:1002px;width:1px;height:20px;background:#d4d4d4"></div>
<div class="t" style="left:21px;top:1009px;font-size:17.5px;color:#111">Stopped.</div>
<!-- time toolbar -->
<div class="a" style="left:790px;top:915.5px;width:373px;height:81.5px;background:#f7f8fc"></div>
<div class="a" style="left:804px;top:915.5px;width:1.6px;height:81.5px;background:#cdcdcd"></div>
<div class="a" style="left:1165px;top:914px;width:7px;height:85px;background:#f7f8fc;border-left:1px solid #c9c9c9"></div>
<div class="grip" style="left:795px;top:925px;height:70px"><i style="top:0px"></i><i style="top:6px"></i><i style="top:12px"></i><i style="top:18px"></i><i style="top:24px"></i><i style="top:30px"></i><i style="top:36px"></i><i style="top:42px"></i><i style="top:48px"></i><i style="top:54px"></i><i style="top:60px"></i></div>
<svg class="a" style="left:0;top:0" width="1172" height="1022">
<rect x="305.2" y="958.6" width="232.5" height="30.8" fill="#e6e6e6"/>
<rect x="305.2" y="958.6" width="232.5" height="2" fill="#6a6a6a"/>
<rect x="305.2" y="958.6" width="2" height="30.8" fill="#6a6a6a"/>
<rect x="307.2" y="960.6" width="228.5" height="26.8" fill="#b9bdc8"/>
<rect x="308.2" y="961.2" width="33.8" height="26.0" fill="#d0d0d0"/>
<text x="316.6" y="982.0" font-size="20" fill="#1818c8" text-anchor="middle">0</text>
<text x="333.6" y="982.0" font-size="20" fill="#1818c8" text-anchor="middle">0</text>
<text x="351.5" y="982.0" font-size="18" fill="#1818c8" text-anchor="middle">h</text>
<rect x="361.0" y="961.2" width="33.8" height="26.0" fill="#d0d0d0"/>
<text x="369.4" y="982.0" font-size="20" fill="#1818c8" text-anchor="middle">0</text>
<text x="386.4" y="982.0" font-size="20" fill="#1818c8" text-anchor="middle">0</text>
<text x="407.3" y="982.0" font-size="18" fill="#1818c8" text-anchor="middle">m</text>
<rect x="419.8" y="961.2" width="34.1" height="26.0" fill="#d0d0d0"/>
<text x="428.3" y="982.0" font-size="20" fill="#1818c8" text-anchor="middle">0</text>
<text x="445.4" y="982.0" font-size="20" fill="#1818c8" text-anchor="middle">3</text>
<text x="455.7" y="982.0" font-size="18" fill="#1818c8" text-anchor="middle">.</text>
<rect x="457.5" y="961.2" width="49.7" height="26.0" fill="#d0d0d0"/>
<text x="465.8" y="982.0" font-size="20" fill="#1818c8" text-anchor="middle">2</text>
<text x="482.4" y="982.0" font-size="20" fill="#1818c8" text-anchor="middle">2</text>
<text x="498.9" y="982.0" font-size="20" fill="#1818c8" text-anchor="middle">8</text>
<text x="515.8" y="982.0" font-size="18" fill="#1818c8" text-anchor="middle">s</text>
<rect x="523.3" y="961.2" width="1.2" height="26.0" fill="#f4f4f4"/>
<polygon points="525.3,971.9 535.0,971.9 530.1,977.3" fill="#000"/>
<rect x="549.0" y="958.6" width="232.5" height="30.8" fill="#e6e6e6"/>
<rect x="549.0" y="958.6" width="232.5" height="2" fill="#6a6a6a"/>
<rect x="549.0" y="958.6" width="2" height="30.8" fill="#6a6a6a"/>
<rect x="551.0" y="960.6" width="228.5" height="26.8" fill="#b9bdc8"/>
<rect x="552.0" y="961.2" width="33.8" height="26.0" fill="#d0d0d0"/>
<text x="560.5" y="982.0" font-size="20" fill="#1818c8" text-anchor="middle">0</text>
<text x="577.3" y="982.0" font-size="20" fill="#1818c8" text-anchor="middle">0</text>
<text x="595.3" y="982.0" font-size="18" fill="#1818c8" text-anchor="middle">h</text>
<rect x="604.8" y="961.2" width="33.8" height="26.0" fill="#d0d0d0"/>
<text x="613.2" y="982.0" font-size="20" fill="#1818c8" text-anchor="middle">0</text>
<text x="630.1" y="982.0" font-size="20" fill="#1818c8" text-anchor="middle">0</text>
<text x="651.1" y="982.0" font-size="18" fill="#1818c8" text-anchor="middle">m</text>
<rect x="663.6" y="961.2" width="34.1" height="26.0" fill="#d0d0d0"/>
<text x="672.1" y="982.0" font-size="20" fill="#1818c8" text-anchor="middle">0</text>
<text x="689.2" y="982.0" font-size="20" fill="#1818c8" text-anchor="middle">3</text>
<text x="699.5" y="982.0" font-size="18" fill="#1818c8" text-anchor="middle">.</text>
<rect x="701.3" y="961.2" width="49.7" height="26.0" fill="#d0d0d0"/>
<text x="709.6" y="982.0" font-size="20" fill="#1818c8" text-anchor="middle">2</text>
<text x="726.1" y="982.0" font-size="20" fill="#1818c8" text-anchor="middle">2</text>
<text x="742.7" y="982.0" font-size="20" fill="#1818c8" text-anchor="middle">8</text>
<text x="759.5" y="982.0" font-size="18" fill="#1818c8" text-anchor="middle">s</text>
<rect x="767.1" y="961.2" width="1.2" height="26.0" fill="#f4f4f4"/>
<polygon points="769.1,971.9 778.8,971.9 773.9,977.3" fill="#000"/>
<rect x="809.5" y="932.4" width="346.5" height="46.4" fill="#e6e6e6"/>
<rect x="809.5" y="932.4" width="346.5" height="2" fill="#6a6a6a"/>
<rect x="809.5" y="932.4" width="2" height="46.4" fill="#6a6a6a"/>
<rect x="811.5" y="934.4" width="342.5" height="42.4" fill="#b9bdc8"/>
<rect x="812.9" y="936.6" width="48.0" height="40.4" fill="#d0d0d0"/>
<text x="824.9" y="968.9" font-size="34" fill="#1818c8" text-anchor="middle">0</text>
<text x="848.9" y="968.9" font-size="34" fill="#1818c8" text-anchor="middle">0</text>
<text x="878.0" y="968.9" font-size="29" fill="#1818c8" text-anchor="middle">h</text>
<rect x="895.2" y="936.6" width="48.0" height="40.4" fill="#d0d0d0"/>
<text x="907.2" y="968.9" font-size="34" fill="#1818c8" text-anchor="middle">0</text>
<text x="931.2" y="968.9" font-size="34" fill="#1818c8" text-anchor="middle">0</text>
<text x="963.8" y="968.9" font-size="29" fill="#1818c8" text-anchor="middle">m</text>
<rect x="984.4" y="936.6" width="48.0" height="40.4" fill="#d0d0d0"/>
<text x="996.4" y="968.9" font-size="34" fill="#1818c8" text-anchor="middle">0</text>
<text x="1020.4" y="968.9" font-size="34" fill="#1818c8" text-anchor="middle">3</text>
<text x="1037.6" y="968.9" font-size="29" fill="#1818c8" text-anchor="middle">.</text>
<rect x="1042.7" y="936.6" width="72.1" height="40.4" fill="#d0d0d0"/>
<text x="1054.7" y="968.9" font-size="34" fill="#1818c8" text-anchor="middle">2</text>
<text x="1078.8" y="968.9" font-size="34" fill="#1818c8" text-anchor="middle">2</text>
<text x="1102.8" y="968.9" font-size="34" fill="#1818c8" text-anchor="middle">8</text>
<text x="1128.5" y="968.9" font-size="29" fill="#1818c8" text-anchor="middle">s</text>
<rect x="1141.2" y="936.6" width="1.2" height="40.4" fill="#f4f4f4"/>
<polygon points="1143.2,953.9 1154.0,953.9 1148.6,959.3" fill="#000"/>
</svg>

</body></html>
